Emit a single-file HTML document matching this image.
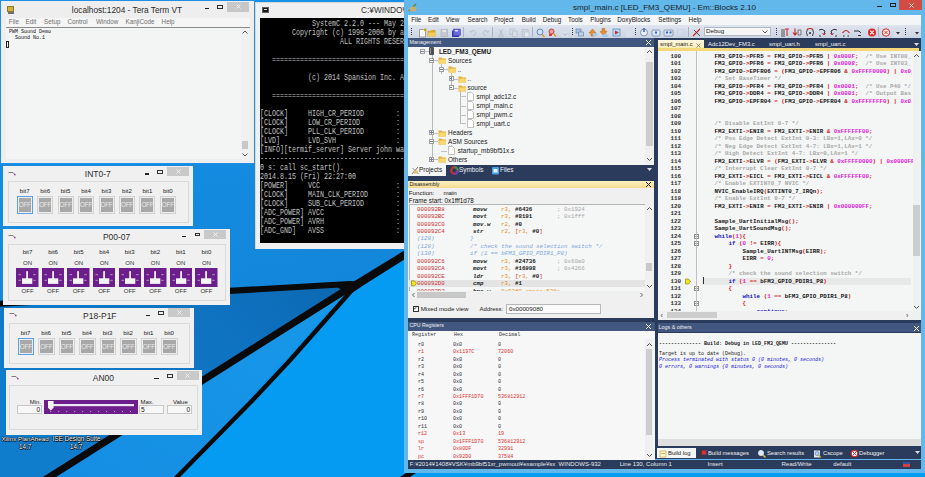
<!DOCTYPE html>
<html><head><meta charset="utf-8"><style>
*{margin:0;padding:0;box-sizing:border-box}
html,body{width:925px;height:477px;overflow:hidden}
body{position:relative;background:#0f86e0;font-family:"Liberation Sans",sans-serif;color:#000}
.a{position:absolute}
.tt{position:absolute;white-space:pre}
</style></head><body>
<svg class="a" style="left:0;top:0" width="925" height="477">
<defs>
<linearGradient id="g1" x1="0" y1="0" x2="0.3" y2="1">
<stop offset="0" stop-color="#1892e8"/>
<stop offset="1" stop-color="#0f80d4"/>
</linearGradient>
<linearGradient id="g2" x1="1" y1="0" x2="0" y2="0.5">
<stop offset="0" stop-color="#0c68b2"/>
<stop offset="0.35" stop-color="#0e72c0"/>
<stop offset="1" stop-color="#107ccc"/>
</linearGradient>
<linearGradient id="g3" x1="1" y1="0" x2="0" y2="1">
<stop offset="0" stop-color="#1898ea"/>
<stop offset="1" stop-color="#148ee2"/>
</linearGradient>
</defs>
<rect width="925" height="477" fill="url(#g1)"/>
<polygon points="0,303 350,285 41,482 0,482" fill="url(#g2)"/>
<polygon points="350,287 48,477 180,477" fill="url(#g3)"/>
<polygon points="350,287 180,477 925,477 925,0" fill="#069bf3"/>
<polyline points="-5,304.1 340.6,284.6 352,284" stroke="#0a0a0a" stroke-width="6" fill="none"/>
<polyline points="349,288 204,379.5 116,435 49.5,477 41,482" stroke="#0a0a0a" stroke-width="7" fill="none" stroke-linejoin="round"/>
<polyline points="352,290 290.2,360 252.8,400 180,474 175,479" stroke="#0a0a0a" stroke-width="4.5" fill="none" stroke-linejoin="round"/>
<polygon points="340,282.5 354.6,281 414,244.6 414,253.4 364.3,284.8 352,293 338,288" fill="#0a0a0a"/>
<polygon points="400,477 406,473 416,473 410,477" fill="#0a0a0a"/>
</svg>
<div class="a" style="left:255px;top:2px;width:150px;height:247px;background:#f0f0f0;border-left:1px solid #d8d8d8;border-top:1px solid #d8d8d8"></div>
<div class="a" style="left:262px;top:7px;width:7px;height:5.5px;background:#1a1a1a;border:1px solid #606060"></div>
<div class="a" style="left:263.5px;top:8.5px;width:3px;height:1px;background:#e0e0e0;"></div>
<div class="tt" style="left:361px;top:6px;font-size:8.3px;line-height:8.3px;color:#303030;">C:¥WINDOWS¥system32¥cmd.exe</div>
<div class="a" style="left:260px;top:18px;width:145px;height:225px;background:#000;"></div>
<div class="a" style="left:260px;top:18px;width:144px;height:225px;overflow:hidden">
<div class="tt" style="left:0;top:0.8999999999999986px;font:9.3px/9px 'Liberation Mono',monospace;color:#c4c4c4;transform:scaleX(0.717);transform-origin:0 0">             SystemC 2.2.0 --- May 20 2011</div>
<div class="tt" style="left:0;top:9.899999999999999px;font:9.3px/9px 'Liberation Mono',monospace;color:#c4c4c4;transform:scaleX(0.717);transform-origin:0 0">        Copyright (c) 1996-2006 by all Contri</div>
<div class="tt" style="left:0;top:18.9px;font:9.3px/9px 'Liberation Mono',monospace;color:#c4c4c4;transform:scaleX(0.717);transform-origin:0 0">                    ALL RIGHTS RESERVED</div>
<div class="tt" style="left:0;top:27.9px;font:9.3px/9px 'Liberation Mono',monospace;color:#c4c4c4;transform:scaleX(0.717);transform-origin:0 0"></div>
<div class="tt" style="left:0;top:36.9px;font:9.3px/9px 'Liberation Mono',monospace;color:#c4c4c4;transform:scaleX(0.717);transform-origin:0 0">   ===========================================</div>
<div class="tt" style="left:0;top:45.900000000000006px;font:9.3px/9px 'Liberation Mono',monospace;color:#c4c4c4;transform:scaleX(0.717);transform-origin:0 0"></div>
<div class="tt" style="left:0;top:54.900000000000006px;font:9.3px/9px 'Liberation Mono',monospace;color:#c4c4c4;transform:scaleX(0.717);transform-origin:0 0">            (c) 2014 Spansion Inc. All right</div>
<div class="tt" style="left:0;top:63.900000000000006px;font:9.3px/9px 'Liberation Mono',monospace;color:#c4c4c4;transform:scaleX(0.717);transform-origin:0 0"></div>
<div class="tt" style="left:0;top:72.9px;font:9.3px/9px 'Liberation Mono',monospace;color:#c4c4c4;transform:scaleX(0.717);transform-origin:0 0">   ===========================================</div>
<div class="tt" style="left:0;top:81.9px;font:9.3px/9px 'Liberation Mono',monospace;color:#c4c4c4;transform:scaleX(0.717);transform-origin:0 0"></div>
<div class="tt" style="left:0;top:90.9px;font:9.3px/9px 'Liberation Mono',monospace;color:#c4c4c4;transform:scaleX(0.717);transform-origin:0 0">[CLOCK]     HIGH_CR_PERIOD        : 250 ns</div>
<div class="tt" style="left:0;top:99.9px;font:9.3px/9px 'Liberation Mono',monospace;color:#c4c4c4;transform:scaleX(0.717);transform-origin:0 0">[CLOCK]     LOW_CR_PERIOD         : 10 ns</div>
<div class="tt" style="left:0;top:108.9px;font:9.3px/9px 'Liberation Mono',monospace;color:#c4c4c4;transform:scaleX(0.717);transform-origin:0 0">[CLOCK]     PLL_CLK_PERIOD        : 10 ns</div>
<div class="tt" style="left:0;top:117.9px;font:9.3px/9px 'Liberation Mono',monospace;color:#c4c4c4;transform:scaleX(0.717);transform-origin:0 0">[LVD]       LVD_SVH               : 4 V</div>
<div class="tt" style="left:0;top:126.9px;font:9.3px/9px 'Liberation Mono',monospace;color:#c4c4c4;transform:scaleX(0.717);transform-origin:0 0">[INFO][termif_server] Server john waiting</div>
<div class="tt" style="left:0;top:135.9px;font:9.3px/9px 'Liberation Mono',monospace;color:#c4c4c4;transform:scaleX(0.717);transform-origin:0 0">--------------------------------------------</div>
<div class="tt" style="left:0;top:144.9px;font:9.3px/9px 'Liberation Mono',monospace;color:#c4c4c4;transform:scaleX(0.717);transform-origin:0 0">0 s: call sc_start().</div>
<div class="tt" style="left:0;top:153.9px;font:9.3px/9px 'Liberation Mono',monospace;color:#c4c4c4;transform:scaleX(0.717);transform-origin:0 0">2014.8.15 (Fri) 22:27:00</div>
<div class="tt" style="left:0;top:162.9px;font:9.3px/9px 'Liberation Mono',monospace;color:#c4c4c4;transform:scaleX(0.717);transform-origin:0 0">[POWER]     VCC                   : 5 V</div>
<div class="tt" style="left:0;top:171.9px;font:9.3px/9px 'Liberation Mono',monospace;color:#c4c4c4;transform:scaleX(0.717);transform-origin:0 0">[CLOCK]     MAIN_CLK_PERIOD       : 1 ns</div>
<div class="tt" style="left:0;top:180.9px;font:9.3px/9px 'Liberation Mono',monospace;color:#c4c4c4;transform:scaleX(0.717);transform-origin:0 0">[CLOCK]     SUB_CLK_PERIOD        : 1 ns</div>
<div class="tt" style="left:0;top:189.9px;font:9.3px/9px 'Liberation Mono',monospace;color:#c4c4c4;transform:scaleX(0.717);transform-origin:0 0">[ADC_POWER] AVCC                  : 5 V</div>
<div class="tt" style="left:0;top:198.9px;font:9.3px/9px 'Liberation Mono',monospace;color:#c4c4c4;transform:scaleX(0.717);transform-origin:0 0">[ADC_POWER] AVRH                  : 5 V</div>
<div class="tt" style="left:0;top:207.9px;font:9.3px/9px 'Liberation Mono',monospace;color:#c4c4c4;transform:scaleX(0.717);transform-origin:0 0">[ADC_GND]   AVSS                  : 0 V</div>
</div>
<div class="a" style="left:0px;top:0px;width:255px;height:163.5px;background:#eeeeee;border:1px solid #1e90ea"></div>
<div class="a" style="left:7px;top:6px;width:7px;height:6px;background:#d8b040;border:1px solid #8a7a30"></div>
<div class="a" style="left:8px;top:12px;width:6px;height:1.5px;background:#707070;"></div>
<div class="tt" style="left:71.8px;top:5.8px;font-size:8.3px;line-height:8.3px;color:#2a2a2a;">localhost:1204 - Tera Term VT</div>
<div class="a" style="left:204.5px;top:7.8px;width:4.2px;height:1.2px;background:#1a1a1a;"></div>
<div class="a" style="left:217.1px;top:4.9px;width:5.7px;height:3.9px;border:0.8px solid #2a2a2a;border-top-width:1.4px"></div>
<div class="a" style="left:227px;top:1.5px;width:22px;height:10.5px;background:#c7c7c7;"></div>
<svg class="a" style="left:235.5px;top:4.3px" width="5" height="5"><path d="M0.5 0.5 L4.5 4.5 M4.5 0.5 L0.5 4.5" stroke="#f4f4f4" stroke-width="0.9"/></svg>
<div class="a" style="left:6px;top:17.5px;width:243.5px;height:9.5px;background:#f5f5f5;"></div>
<div class="tt" style="left:8.8px;top:18.77px;font-size:6.3px;line-height:6.3px;color:#707070;">File</div>
<div class="tt" style="left:25.5px;top:18.77px;font-size:6.3px;line-height:6.3px;color:#707070;">Edit</div>
<div class="tt" style="left:44px;top:18.77px;font-size:6.3px;line-height:6.3px;color:#707070;">Setup</div>
<div class="tt" style="left:67.4px;top:18.77px;font-size:6.3px;line-height:6.3px;color:#707070;">Control</div>
<div class="tt" style="left:95.9px;top:18.77px;font-size:6.3px;line-height:6.3px;color:#707070;">Window</div>
<div class="tt" style="left:125.5px;top:18.77px;font-size:6.3px;line-height:6.3px;color:#707070;">KanjiCode</div>
<div class="tt" style="left:161.6px;top:18.77px;font-size:6.3px;line-height:6.3px;color:#707070;">Help</div>
<div class="a" style="left:6px;top:27px;width:243.5px;height:1px;background:#8a8a8a;"></div>
<div class="a" style="left:6px;top:28px;width:243.5px;height:131px;background:#f3f4f4;"></div>
<div class="tt" style="left:8.8px;top:28.6px;font:6px/6.3px 'Liberation Mono',monospace;color:#111;transform:scaleX(0.833);transform-origin:0 0">PWM Sound Demo
  Sound No.1</div>
<div class="a" style="left:6.3px;top:41.4px;width:2.6px;height:6.3px;background:#f3f4f4;border:0.8px solid #222"></div>
<div class="a" style="left:241px;top:28px;width:8.5px;height:131px;background:#f0f0f0;"></div>
<svg class="a" style="left:242px;top:30px" width="6" height="4"><path d="M0.5 3.5 L3 1 L5.5 3.5" stroke="#555" fill="none" stroke-width="1"/></svg>
<div class="a" style="left:241.5px;top:141px;width:6.5px;height:8px;background:#c8c8c8;"></div>
<svg class="a" style="left:242px;top:152.5px" width="6" height="4"><path d="M0.5 0.5 L3 3 L5.5 0.5" stroke="#555" fill="none" stroke-width="1"/></svg>
<div class="a" style="left:3.1px;top:166px;width:189.70000000000002px;height:60.30000000000001px;background:#f0f0f0;"></div>
<svg class="a" style="left:8.1px;top:170.5px" width="8" height="5"><path d="M0.5 1.5 L5 1.5 L6.5 3.2" stroke="#707070" fill="none" stroke-width="0.9"/><circle cx="6.8" cy="3.6" r="0.9" fill="#a040a0"/></svg>
<div class="tt" style="left:57.8px;top:170.0px;width:80px;text-align:center;font-size:8.5px;line-height:9px;color:#2e2e2e">INT0-7</div>
<div class="a" style="left:144.6px;top:173.4px;width:4.2px;height:1.2px;background:#222;"></div>
<div class="a" style="left:157.15px;top:169.7px;width:5.7px;height:3.9px;border:0.8px solid #333;border-top-width:1.4px"></div>
<div class="a" style="left:167px;top:166.5px;width:22px;height:9.900000000000006px;background:#c9c9c9;"></div>
<svg class="a" style="left:175.5px;top:168.95px" width="5" height="5"><path d="M0.5 0.5 L4.5 4.5 M4.5 0.5 L0.5 4.5" stroke="#f4f4f4" stroke-width="0.9"/></svg>
<div class="a" style="left:7.9px;top:181.4px;width:181.0px;height:41.599999999999994px;background:transparent;border:1px solid #dadada"></div>
<div class="tt" style="left:9.7px;top:187.45px;width:30px;text-align:center;font-size:6.1px;line-height:7.1px;color:#222">bit7</div>
<div class="a" style="left:16.7px;top:196px;width:16px;height:17.5px;border:1px solid #5aa0e8;background:#ececec;padding:1px"><div style="width:100%;height:100%;background:#a8a8a8;color:#e8e8e8;font-size:6.3px;line-height:13.5px;text-align:center;letter-spacing:-0.2px">OFF</div></div>
<div class="tt" style="left:30.15px;top:187.45px;width:30px;text-align:center;font-size:6.1px;line-height:7.1px;color:#222">bit6</div>
<div class="a" style="left:37.15px;top:196px;width:16px;height:17.5px;border:1px solid #d2d2d2;background:#ececec;padding:1px"><div style="width:100%;height:100%;background:#a8a8a8;color:#e8e8e8;font-size:6.3px;line-height:13.5px;text-align:center;letter-spacing:-0.2px">OFF</div></div>
<div class="tt" style="left:50.599999999999994px;top:187.45px;width:30px;text-align:center;font-size:6.1px;line-height:7.1px;color:#222">bit5</div>
<div class="a" style="left:57.599999999999994px;top:196px;width:16px;height:17.5px;border:1px solid #d2d2d2;background:#ececec;padding:1px"><div style="width:100%;height:100%;background:#a8a8a8;color:#e8e8e8;font-size:6.3px;line-height:13.5px;text-align:center;letter-spacing:-0.2px">OFF</div></div>
<div class="tt" style="left:71.05px;top:187.45px;width:30px;text-align:center;font-size:6.1px;line-height:7.1px;color:#222">bit4</div>
<div class="a" style="left:78.05px;top:196px;width:16px;height:17.5px;border:1px solid #d2d2d2;background:#ececec;padding:1px"><div style="width:100%;height:100%;background:#a8a8a8;color:#e8e8e8;font-size:6.3px;line-height:13.5px;text-align:center;letter-spacing:-0.2px">OFF</div></div>
<div class="tt" style="left:91.5px;top:187.45px;width:30px;text-align:center;font-size:6.1px;line-height:7.1px;color:#222">bit3</div>
<div class="a" style="left:98.5px;top:196px;width:16px;height:17.5px;border:1px solid #d2d2d2;background:#ececec;padding:1px"><div style="width:100%;height:100%;background:#a8a8a8;color:#e8e8e8;font-size:6.3px;line-height:13.5px;text-align:center;letter-spacing:-0.2px">OFF</div></div>
<div class="tt" style="left:111.95px;top:187.45px;width:30px;text-align:center;font-size:6.1px;line-height:7.1px;color:#222">bit2</div>
<div class="a" style="left:118.95px;top:196px;width:16px;height:17.5px;border:1px solid #d2d2d2;background:#ececec;padding:1px"><div style="width:100%;height:100%;background:#a8a8a8;color:#e8e8e8;font-size:6.3px;line-height:13.5px;text-align:center;letter-spacing:-0.2px">OFF</div></div>
<div class="tt" style="left:132.39999999999998px;top:187.45px;width:30px;text-align:center;font-size:6.1px;line-height:7.1px;color:#222">bit1</div>
<div class="a" style="left:139.39999999999998px;top:196px;width:16px;height:17.5px;border:1px solid #d2d2d2;background:#ececec;padding:1px"><div style="width:100%;height:100%;background:#a8a8a8;color:#e8e8e8;font-size:6.3px;line-height:13.5px;text-align:center;letter-spacing:-0.2px">OFF</div></div>
<div class="tt" style="left:152.85px;top:187.45px;width:30px;text-align:center;font-size:6.1px;line-height:7.1px;color:#222">bit0</div>
<div class="a" style="left:159.85px;top:196px;width:16px;height:17.5px;border:1px solid #d2d2d2;background:#ececec;padding:1px"><div style="width:100%;height:100%;background:#a8a8a8;color:#e8e8e8;font-size:6.3px;line-height:13.5px;text-align:center;letter-spacing:-0.2px">OFF</div></div>
<div class="a" style="left:3.1px;top:229px;width:226.9px;height:75.60000000000002px;background:#f0f0f0;"></div>
<svg class="a" style="left:8.1px;top:233.5px" width="8" height="5"><path d="M0.5 1.5 L5 1.5 L6.5 3.2" stroke="#707070" fill="none" stroke-width="0.9"/><circle cx="6.8" cy="3.6" r="0.9" fill="#a040a0"/></svg>
<div class="tt" style="left:76.6px;top:232.8px;width:80px;text-align:center;font-size:8.5px;line-height:9px;color:#2e2e2e">P00-07</div>
<div class="a" style="left:181.9px;top:236.20000000000002px;width:4.2px;height:1.2px;background:#222;"></div>
<div class="a" style="left:194.75px;top:232.5px;width:5.7px;height:3.9px;border:0.8px solid #333;border-top-width:1.4px"></div>
<div class="a" style="left:204.3px;top:229.8px;width:22.0px;height:9.199999999999989px;background:#c9c9c9;"></div>
<svg class="a" style="left:212.8px;top:231.9px" width="5" height="5"><path d="M0.5 0.5 L4.5 4.5 M4.5 0.5 L0.5 4.5" stroke="#f4f4f4" stroke-width="0.9"/></svg>
<div class="a" style="left:7.9px;top:244px;width:218.1px;height:57px;background:transparent;border:1px solid #dadada"></div>
<div class="tt" style="left:12.55px;top:247.85px;width:30px;text-align:center;font-size:6.1px;line-height:7.1px;color:#222">bit7</div>
<div class="tt" style="left:12.55px;top:259.7px;width:30px;text-align:center;font-size:6.0px;line-height:7.0px;color:#333">ON</div>
<div class="tt" style="left:12.55px;top:287.8px;width:30px;text-align:center;font-size:6.0px;line-height:7.0px;color:#333">OFF</div>
<svg class="a" style="left:16.3px;top:267.6px" width="22.5" height="19.7"><rect width="22.5" height="19.7" fill="#6c1e8c"/><rect x="10.2" y="3.2" width="1.8" height="8" fill="#f0f0f0"/><rect x="6" y="10.3" width="10.3" height="5.6" fill="#f4f4f4"/><path d="M2.5 6.7 h2.5 M17.2 6.7 h2.5 M2.5 12.3 h2.5 M17.2 12.3 h2.5" stroke="#c8b0d4" stroke-width="0.8"/></svg>
<div class="tt" style="left:38.1px;top:247.85px;width:30px;text-align:center;font-size:6.1px;line-height:7.1px;color:#222">bit6</div>
<div class="tt" style="left:38.1px;top:259.7px;width:30px;text-align:center;font-size:6.0px;line-height:7.0px;color:#333">ON</div>
<div class="tt" style="left:38.1px;top:287.8px;width:30px;text-align:center;font-size:6.0px;line-height:7.0px;color:#333">OFF</div>
<svg class="a" style="left:41.85px;top:267.6px" width="22.5" height="19.7"><rect width="22.5" height="19.7" fill="#6c1e8c"/><rect x="10.2" y="3.2" width="1.8" height="8" fill="#f0f0f0"/><rect x="6" y="10.3" width="10.3" height="5.6" fill="#f4f4f4"/><path d="M2.5 6.7 h2.5 M17.2 6.7 h2.5 M2.5 12.3 h2.5 M17.2 12.3 h2.5" stroke="#c8b0d4" stroke-width="0.8"/></svg>
<div class="tt" style="left:63.650000000000006px;top:247.85px;width:30px;text-align:center;font-size:6.1px;line-height:7.1px;color:#222">bit5</div>
<div class="tt" style="left:63.650000000000006px;top:259.7px;width:30px;text-align:center;font-size:6.0px;line-height:7.0px;color:#333">ON</div>
<div class="tt" style="left:63.650000000000006px;top:287.8px;width:30px;text-align:center;font-size:6.0px;line-height:7.0px;color:#333">OFF</div>
<svg class="a" style="left:67.4px;top:267.6px" width="22.5" height="19.7"><rect width="22.5" height="19.7" fill="#6c1e8c"/><rect x="10.2" y="3.2" width="1.8" height="8" fill="#f0f0f0"/><rect x="6" y="10.3" width="10.3" height="5.6" fill="#f4f4f4"/><path d="M2.5 6.7 h2.5 M17.2 6.7 h2.5 M2.5 12.3 h2.5 M17.2 12.3 h2.5" stroke="#c8b0d4" stroke-width="0.8"/></svg>
<div class="tt" style="left:89.2px;top:247.85px;width:30px;text-align:center;font-size:6.1px;line-height:7.1px;color:#222">bit4</div>
<div class="tt" style="left:89.2px;top:259.7px;width:30px;text-align:center;font-size:6.0px;line-height:7.0px;color:#333">ON</div>
<div class="tt" style="left:89.2px;top:287.8px;width:30px;text-align:center;font-size:6.0px;line-height:7.0px;color:#333">OFF</div>
<svg class="a" style="left:92.95px;top:267.6px" width="22.5" height="19.7"><rect width="22.5" height="19.7" fill="#6c1e8c"/><rect x="10.2" y="3.2" width="1.8" height="8" fill="#f0f0f0"/><rect x="6" y="10.3" width="10.3" height="5.6" fill="#f4f4f4"/><path d="M2.5 6.7 h2.5 M17.2 6.7 h2.5 M2.5 12.3 h2.5 M17.2 12.3 h2.5" stroke="#c8b0d4" stroke-width="0.8"/></svg>
<div class="tt" style="left:114.75px;top:247.85px;width:30px;text-align:center;font-size:6.1px;line-height:7.1px;color:#222">bit3</div>
<div class="tt" style="left:114.75px;top:259.7px;width:30px;text-align:center;font-size:6.0px;line-height:7.0px;color:#333">ON</div>
<div class="tt" style="left:114.75px;top:287.8px;width:30px;text-align:center;font-size:6.0px;line-height:7.0px;color:#333">OFF</div>
<svg class="a" style="left:118.5px;top:267.6px" width="22.5" height="19.7"><rect width="22.5" height="19.7" fill="#6c1e8c"/><rect x="10.2" y="3.2" width="1.8" height="8" fill="#f0f0f0"/><rect x="6" y="10.3" width="10.3" height="5.6" fill="#f4f4f4"/><path d="M2.5 6.7 h2.5 M17.2 6.7 h2.5 M2.5 12.3 h2.5 M17.2 12.3 h2.5" stroke="#c8b0d4" stroke-width="0.8"/></svg>
<div class="tt" style="left:140.3px;top:247.85px;width:30px;text-align:center;font-size:6.1px;line-height:7.1px;color:#222">bit2</div>
<div class="tt" style="left:140.3px;top:259.7px;width:30px;text-align:center;font-size:6.0px;line-height:7.0px;color:#333">ON</div>
<div class="tt" style="left:140.3px;top:287.8px;width:30px;text-align:center;font-size:6.0px;line-height:7.0px;color:#333">OFF</div>
<svg class="a" style="left:144.05px;top:267.6px" width="22.5" height="19.7"><rect width="22.5" height="19.7" fill="#6c1e8c"/><rect x="10.2" y="3.2" width="1.8" height="8" fill="#f0f0f0"/><rect x="6" y="10.3" width="10.3" height="5.6" fill="#f4f4f4"/><path d="M2.5 6.7 h2.5 M17.2 6.7 h2.5 M2.5 12.3 h2.5 M17.2 12.3 h2.5" stroke="#c8b0d4" stroke-width="0.8"/></svg>
<div class="tt" style="left:165.85000000000002px;top:247.85px;width:30px;text-align:center;font-size:6.1px;line-height:7.1px;color:#222">bit1</div>
<div class="tt" style="left:165.85000000000002px;top:259.7px;width:30px;text-align:center;font-size:6.0px;line-height:7.0px;color:#333">ON</div>
<div class="tt" style="left:165.85000000000002px;top:287.8px;width:30px;text-align:center;font-size:6.0px;line-height:7.0px;color:#333">OFF</div>
<svg class="a" style="left:169.60000000000002px;top:267.6px" width="22.5" height="19.7"><rect width="22.5" height="19.7" fill="#6c1e8c"/><rect x="10.2" y="3.2" width="1.8" height="8" fill="#f0f0f0"/><rect x="6" y="10.3" width="10.3" height="5.6" fill="#f4f4f4"/><path d="M2.5 6.7 h2.5 M17.2 6.7 h2.5 M2.5 12.3 h2.5 M17.2 12.3 h2.5" stroke="#c8b0d4" stroke-width="0.8"/></svg>
<div class="tt" style="left:191.4px;top:247.85px;width:30px;text-align:center;font-size:6.1px;line-height:7.1px;color:#222">bit0</div>
<div class="tt" style="left:191.4px;top:259.7px;width:30px;text-align:center;font-size:6.0px;line-height:7.0px;color:#333">ON</div>
<div class="tt" style="left:191.4px;top:287.8px;width:30px;text-align:center;font-size:6.0px;line-height:7.0px;color:#333">OFF</div>
<svg class="a" style="left:195.15px;top:267.6px" width="22.5" height="19.7"><rect width="22.5" height="19.7" fill="#6c1e8c"/><rect x="10.2" y="3.2" width="1.8" height="8" fill="#f0f0f0"/><rect x="6" y="10.3" width="10.3" height="5.6" fill="#f4f4f4"/><path d="M2.5 6.7 h2.5 M17.2 6.7 h2.5 M2.5 12.3 h2.5 M17.2 12.3 h2.5" stroke="#c8b0d4" stroke-width="0.8"/></svg>
<div class="a" style="left:4.2px;top:307.6px;width:189.70000000000002px;height:60.19999999999999px;background:#f0f0f0;"></div>
<svg class="a" style="left:9.2px;top:312.1px" width="8" height="5"><path d="M0.5 1.5 L5 1.5 L6.5 3.2" stroke="#707070" fill="none" stroke-width="0.9"/><circle cx="6.8" cy="3.6" r="0.9" fill="#a040a0"/></svg>
<div class="tt" style="left:59.8px;top:311.5px;width:80px;text-align:center;font-size:8.5px;line-height:9px;color:#2e2e2e">P18-P1F</div>
<div class="a" style="left:145.9px;top:314.9px;width:4.2px;height:1.2px;background:#222;"></div>
<div class="a" style="left:158.15px;top:311.2px;width:5.7px;height:3.9px;border:0.8px solid #333;border-top-width:1.4px"></div>
<div class="a" style="left:168px;top:307.9px;width:22.30000000000001px;height:9.600000000000023px;background:#c9c9c9;"></div>
<svg class="a" style="left:176.65px;top:310.2px" width="5" height="5"><path d="M0.5 0.5 L4.5 4.5 M4.5 0.5 L0.5 4.5" stroke="#f4f4f4" stroke-width="0.9"/></svg>
<div class="a" style="left:8.5px;top:323px;width:181.5px;height:41px;background:transparent;border:1px solid #dadada"></div>
<div class="tt" style="left:10.600000000000001px;top:329.34999999999997px;width:30px;text-align:center;font-size:6.1px;line-height:7.1px;color:#222">bit7</div>
<div class="a" style="left:17.6px;top:338px;width:16.5px;height:17px;border:1px solid #5aa0e8;background:#ececec;padding:1px"><div style="width:100%;height:100%;background:#a8a8a8;color:#e8e8e8;font-size:6.3px;line-height:13px;text-align:center;letter-spacing:-0.2px">OFF</div></div>
<div class="tt" style="left:31.1px;top:329.34999999999997px;width:30px;text-align:center;font-size:6.1px;line-height:7.1px;color:#222">bit6</div>
<div class="a" style="left:38.1px;top:338px;width:16.5px;height:17px;border:1px solid #d2d2d2;background:#ececec;padding:1px"><div style="width:100%;height:100%;background:#a8a8a8;color:#e8e8e8;font-size:6.3px;line-height:13px;text-align:center;letter-spacing:-0.2px">OFF</div></div>
<div class="tt" style="left:51.599999999999994px;top:329.34999999999997px;width:30px;text-align:center;font-size:6.1px;line-height:7.1px;color:#222">bit5</div>
<div class="a" style="left:58.599999999999994px;top:338px;width:16.5px;height:17px;border:1px solid #d2d2d2;background:#ececec;padding:1px"><div style="width:100%;height:100%;background:#a8a8a8;color:#e8e8e8;font-size:6.3px;line-height:13px;text-align:center;letter-spacing:-0.2px">OFF</div></div>
<div class="tt" style="left:72.1px;top:329.34999999999997px;width:30px;text-align:center;font-size:6.1px;line-height:7.1px;color:#222">bit4</div>
<div class="a" style="left:79.1px;top:338px;width:16.5px;height:17px;border:1px solid #d2d2d2;background:#ececec;padding:1px"><div style="width:100%;height:100%;background:#a8a8a8;color:#e8e8e8;font-size:6.3px;line-height:13px;text-align:center;letter-spacing:-0.2px">OFF</div></div>
<div class="tt" style="left:92.6px;top:329.34999999999997px;width:30px;text-align:center;font-size:6.1px;line-height:7.1px;color:#222">bit3</div>
<div class="a" style="left:99.6px;top:338px;width:16.5px;height:17px;border:1px solid #d2d2d2;background:#ececec;padding:1px"><div style="width:100%;height:100%;background:#a8a8a8;color:#e8e8e8;font-size:6.3px;line-height:13px;text-align:center;letter-spacing:-0.2px">OFF</div></div>
<div class="tt" style="left:113.1px;top:329.34999999999997px;width:30px;text-align:center;font-size:6.1px;line-height:7.1px;color:#222">bit2</div>
<div class="a" style="left:120.1px;top:338px;width:16.5px;height:17px;border:1px solid #d2d2d2;background:#ececec;padding:1px"><div style="width:100%;height:100%;background:#a8a8a8;color:#e8e8e8;font-size:6.3px;line-height:13px;text-align:center;letter-spacing:-0.2px">OFF</div></div>
<div class="tt" style="left:133.6px;top:329.34999999999997px;width:30px;text-align:center;font-size:6.1px;line-height:7.1px;color:#222">bit1</div>
<div class="a" style="left:140.6px;top:338px;width:16.5px;height:17px;border:1px solid #d2d2d2;background:#ececec;padding:1px"><div style="width:100%;height:100%;background:#a8a8a8;color:#e8e8e8;font-size:6.3px;line-height:13px;text-align:center;letter-spacing:-0.2px">OFF</div></div>
<div class="tt" style="left:154.1px;top:329.34999999999997px;width:30px;text-align:center;font-size:6.1px;line-height:7.1px;color:#222">bit0</div>
<div class="a" style="left:161.1px;top:338px;width:16.5px;height:17px;border:1px solid #d2d2d2;background:#ececec;padding:1px"><div style="width:100%;height:100%;background:#a8a8a8;color:#e8e8e8;font-size:6.3px;line-height:13px;text-align:center;letter-spacing:-0.2px">OFF</div></div>
<div class="a" style="left:5.7px;top:370px;width:196.70000000000002px;height:64.5px;background:#f0f0f0;"></div>
<svg class="a" style="left:10.7px;top:374.5px" width="8" height="5"><path d="M0.5 1.5 L5 1.5 L6.5 3.2" stroke="#707070" fill="none" stroke-width="0.9"/><circle cx="6.8" cy="3.6" r="0.9" fill="#a040a0"/></svg>
<div class="tt" style="left:63.400000000000006px;top:374.3px;width:80px;text-align:center;font-size:8.5px;line-height:9px;color:#2e2e2e">AN00</div>
<div class="a" style="left:154.4px;top:377.7px;width:4.2px;height:1.2px;background:#222;"></div>
<div class="a" style="left:166.95000000000002px;top:374.0px;width:5.7px;height:3.9px;border:0.8px solid #333;border-top-width:1.4px"></div>
<div class="a" style="left:177px;top:370.8px;width:21.69999999999999px;height:9.199999999999989px;background:#c9c9c9;"></div>
<svg class="a" style="left:185.35px;top:372.9px" width="5" height="5"><path d="M0.5 0.5 L4.5 4.5 M4.5 0.5 L0.5 4.5" stroke="#f4f4f4" stroke-width="0.9"/></svg>
<div class="a" style="left:9px;top:384.8px;width:189px;height:45.69999999999999px;background:transparent;border:1px solid #dadada"></div>
<div class="tt" style="left:20px;top:398.6px;width:21px;text-align:right;font-size:6px;line-height:7px;color:#222">Min.</div>
<div class="a" style="left:16.6px;top:405.4px;width:25.3px;height:9.1px;background:#f7f7f7;border:1px solid #c8c8c8"></div>
<div class="tt" style="left:16.6px;top:406.4px;width:23.5px;text-align:right;font-size:6.6px;line-height:7px;color:#222">0</div>
<svg class="a" style="left:43.8px;top:400.3px" width="94" height="14.1"><rect width="94" height="14.1" fill="#6c1e8c"/><rect x="4" y="4" width="86" height="2.2" fill="#ece4f0"/><path d="M4 1 h5.6 v6.8 l-2.8 2.6 l-2.8 -2.6z" fill="#f4f4f4"/><rect x="6.30" y="11" width="0.9" height="0.9" fill="#d8c8e0"/><rect x="14.28" y="11" width="0.9" height="0.9" fill="#d8c8e0"/><rect x="22.26" y="11" width="0.9" height="0.9" fill="#d8c8e0"/><rect x="30.24" y="11" width="0.9" height="0.9" fill="#d8c8e0"/><rect x="38.22" y="11" width="0.9" height="0.9" fill="#d8c8e0"/><rect x="46.20" y="11" width="0.9" height="0.9" fill="#d8c8e0"/><rect x="54.18" y="11" width="0.9" height="0.9" fill="#d8c8e0"/><rect x="62.16" y="11" width="0.9" height="0.9" fill="#d8c8e0"/><rect x="70.14" y="11" width="0.9" height="0.9" fill="#d8c8e0"/><rect x="78.12" y="11" width="0.9" height="0.9" fill="#d8c8e0"/><rect x="86.10" y="11" width="0.9" height="0.9" fill="#d8c8e0"/></svg>
<div class="tt" style="left:140.5px;top:398.6px;font-size:6px;line-height:7px;color:#222">Max.</div>
<div class="a" style="left:139px;top:405.4px;width:25.4px;height:9.1px;background:#f7f7f7;border:1px solid #c8c8c8"></div>
<div class="tt" style="left:141px;top:406.4px;font-size:6.6px;line-height:7px;color:#222">5</div>
<div class="tt" style="left:172.9px;top:398.6px;font-size:6px;line-height:7px;color:#222">Value</div>
<div class="a" style="left:167.2px;top:405.4px;width:24.5px;height:9.1px;background:#f7f7f7;border:1px solid #c8c8c8"></div>
<div class="tt" style="left:167.2px;top:406.4px;width:23px;text-align:right;font-size:6.6px;line-height:7px;color:#222">0</div>
<div class="tt" style="left:1.4px;top:434.8px;font-size:6.25px;line-height:7.5px;color:#fff;text-shadow:0 0 1px #000,0 0 1px #000,0 0 1px #000,0.5px 0.5px 0.5px #000">Xilinx PlanAhead</div>
<div class="tt" style="left:19px;top:442.5px;font-size:6.3px;line-height:7.5px;color:#fff;text-shadow:0 0 1px #000,0 0 1px #000,0 0 1px #000,0.5px 0.5px 0.5px #000">14.7</div>
<div class="tt" style="left:52.8px;top:434.8px;font-size:6.3px;line-height:7.5px;color:#fff;text-shadow:0 0 1px #000,0 0 1px #000,0 0 1px #000,0.5px 0.5px 0.5px #000">ISE Design Suite</div>
<div class="tt" style="left:70px;top:442.5px;font-size:6.3px;line-height:7.5px;color:#fff;text-shadow:0 0 1px #000,0 0 1px #000,0 0 1px #000,0.5px 0.5px 0.5px #000">14.7</div>
<div class="a" style="left:404px;top:0px;width:521px;height:472.5px;background:#62b7eb;"></div>
<div class="tt" style="left:573px;top:4.06px;font-size:8.1px;line-height:8.1px;color:#1e1e1e;">smpl_main.c [LED_FM3_QEMU] - Em::Blocks 2.10</div>
<svg class="a" style="left:407px;top:2px" width="12" height="12"><path d="M2 9 L9 2" stroke="#6a8a30" stroke-width="1.6"/><ellipse cx="6" cy="7" rx="3.5" ry="2.5" fill="#c8b070"/></svg>
<div class="a" style="left:877.2px;top:5.8px;width:4.6px;height:1.3px;background:#1e1e1e;"></div>
<div class="a" style="left:890.2px;top:3.2px;width:5.7px;height:3.8px;border:0.8px solid #1e1e1e;border-top-width:1.3px"></div>
<div class="a" style="left:899.4px;top:0px;width:22.5px;height:9.8px;background:#d24c44;"></div>
<svg class="a" style="left:908.5px;top:2.8px" width="5" height="5"><path d="M0.5 0.5 L4.5 4.5 M4.5 0.5 L0.5 4.5" stroke="#f4f4f4" stroke-width="0.9"/></svg>
<div class="a" style="left:408px;top:15px;width:513px;height:10px;background:#f4f5f6;"></div>
<div class="tt" style="left:411.2px;top:16.67px;font-size:6.3px;line-height:6.3px;color:#1a1a1a;">File</div>
<div class="tt" style="left:428px;top:16.67px;font-size:6.3px;line-height:6.3px;color:#1a1a1a;">Edit</div>
<div class="tt" style="left:445.8px;top:16.67px;font-size:6.3px;line-height:6.3px;color:#1a1a1a;">View</div>
<div class="tt" style="left:467.5px;top:16.67px;font-size:6.3px;line-height:6.3px;color:#1a1a1a;">Search</div>
<div class="tt" style="left:494px;top:16.67px;font-size:6.3px;line-height:6.3px;color:#1a1a1a;">Project</div>
<div class="tt" style="left:521.7px;top:16.67px;font-size:6.3px;line-height:6.3px;color:#1a1a1a;">Build</div>
<div class="tt" style="left:542.8px;top:16.67px;font-size:6.3px;line-height:6.3px;color:#1a1a1a;">Debug</div>
<div class="tt" style="left:568px;top:16.67px;font-size:6.3px;line-height:6.3px;color:#1a1a1a;">Tools</div>
<div class="tt" style="left:590.3px;top:16.67px;font-size:6.3px;line-height:6.3px;color:#1a1a1a;">Plugins</div>
<div class="tt" style="left:617.3px;top:16.67px;font-size:6.3px;line-height:6.3px;color:#1a1a1a;">DoxyBlocks</div>
<div class="tt" style="left:658.3px;top:16.67px;font-size:6.3px;line-height:6.3px;color:#1a1a1a;">Settings</div>
<div class="tt" style="left:688.6px;top:16.67px;font-size:6.3px;line-height:6.3px;color:#1a1a1a;">Help</div>
<div class="a" style="left:408px;top:25px;width:513px;height:13px;background:linear-gradient(#dfe5ef,#cbd4e3);"></div>
<div class="a" style="left:411px;top:27.5px;width:1px;height:1px;background:#3a3a3a;"></div>
<div class="a" style="left:411px;top:29.5px;width:1px;height:1px;background:#3a3a3a;"></div>
<div class="a" style="left:411px;top:31.5px;width:1px;height:1px;background:#3a3a3a;"></div>
<div class="a" style="left:411px;top:33.5px;width:1px;height:1px;background:#3a3a3a;"></div>
<svg class="a" style="left:418px;top:26.5px" width="10" height="11"><path d="M1.5 2.5h4l2 2v5.5h-6z" fill="#fafafa" stroke="#8a8a8a" stroke-width="0.8"/><circle cx="7.2" cy="2.8" r="1.6" fill="#e0b020"/><circle cx="7.2" cy="2.8" r="0.7" fill="#70b030"/></svg>
<svg class="a" style="left:427px;top:26.5px" width="10" height="11"><path d="M0.5 4h3l1-1h4v6.5h-8z" fill="#d8a830"/><path d="M1.5 5.5h8l-1.5 4h-7z" fill="#f0cc60"/></svg>
<svg class="a" style="left:440px;top:26.5px" width="9" height="11"><rect x="1" y="2.5" width="6.5" height="7" fill="#c4c8d0" stroke="#a8aeb8" stroke-width="0.6"/><rect x="2.5" y="3" width="3.5" height="2" fill="#e8e8e8"/></svg>
<svg class="a" style="left:451px;top:26.5px" width="10" height="11"><rect x="1" y="3.5" width="7" height="6.5" fill="#3a3ab8"/><rect x="2.5" y="2" width="7" height="6.5" fill="#6a6ae0" stroke="#4040b0" stroke-width="0.5"/><rect x="4" y="3" width="3" height="1.5" fill="#e0e0f0"/></svg>
<div class="a" style="left:463px;top:27px;width:1px;height:10px;background:#a9b3c4;"></div>
<svg class="a" style="left:469px;top:26.5px" width="9" height="11"><path d="M2 5 a2.5 2.5 0 1 1 2 3.5" stroke="#b8c0cc" fill="none" stroke-width="1"/><path d="M1 3.5 l1 2 l2 -1" stroke="#b8c0cc" fill="none" stroke-width="0.8"/></svg>
<svg class="a" style="left:481px;top:26.5px" width="9" height="11"><path d="M7 5 a2.5 2.5 0 1 0 -2 3.5" stroke="#b8c0cc" fill="none" stroke-width="1"/><path d="M8 3.5 l-1 2 l-2 -1" stroke="#b8c0cc" fill="none" stroke-width="0.8"/></svg>
<div class="a" style="left:492px;top:27px;width:1px;height:10px;background:#a9b3c4;"></div>
<svg class="a" style="left:497px;top:26.5px" width="8" height="11"><path d="M2 2 L5.5 8 M6 2 L2.5 8" stroke="#b0b8c4" stroke-width="0.8"/><circle cx="2.5" cy="9" r="1" fill="none" stroke="#b0b8c4" stroke-width="0.6"/><circle cx="5.5" cy="9" r="1" fill="none" stroke="#b0b8c4" stroke-width="0.6"/></svg>
<svg class="a" style="left:509px;top:26.5px" width="9" height="11"><rect x="1" y="2" width="4.5" height="5.5" fill="none" stroke="#b8c0cc" stroke-width="0.8"/><rect x="3.5" y="4" width="4.5" height="5.5" fill="#d8dde6" stroke="#b8c0cc" stroke-width="0.8"/></svg>
<svg class="a" style="left:521px;top:26.5px" width="9" height="11"><rect x="1" y="2.5" width="6" height="7" fill="#d0d4dc" stroke="#b8c0cc" stroke-width="0.8"/><rect x="3.5" y="5" width="4.5" height="5" fill="#e4e8ee" stroke="#b8c0cc" stroke-width="0.6"/></svg>
<div class="a" style="left:532px;top:27px;width:1px;height:10px;background:#a9b3c4;"></div>
<svg class="a" style="left:536px;top:26.5px" width="10" height="11"><circle cx="4" cy="5" r="3" fill="#c8e0f8" stroke="#5880b0" stroke-width="0.9"/><path d="M6 7.5 L8.5 10" stroke="#d0a020" stroke-width="1.6"/></svg>
<svg class="a" style="left:548px;top:26.5px" width="10" height="11"><circle cx="3.5" cy="4.5" r="2.5" fill="#f0a0a0" stroke="#c03030" stroke-width="0.9"/><path d="M5.5 6.5 L8 9.5" stroke="#d0a020" stroke-width="1.5"/><rect x="1" y="7" width="3" height="2" fill="#d04040"/></svg>
<div class="a" style="left:561px;top:27px;width:7px;height:10px;background:#d8dde8;"></div>
<svg class="a" style="left:562px;top:26.5px" width="6" height="11"><path d="M1 6.5 L3 8.5 L5 6.5" stroke="#a0a8b8" fill="none" stroke-width="0.8"/></svg>
<div class="a" style="left:572px;top:27.5px;width:1px;height:1px;background:#3a3a3a;"></div>
<div class="a" style="left:572px;top:29.5px;width:1px;height:1px;background:#3a3a3a;"></div>
<div class="a" style="left:572px;top:31.5px;width:1px;height:1px;background:#3a3a3a;"></div>
<div class="a" style="left:572px;top:33.5px;width:1px;height:1px;background:#3a3a3a;"></div>
<svg class="a" style="left:575px;top:26.5px" width="10" height="11"><rect x="1" y="2" width="5" height="4" fill="#a8c8e8" stroke="#5878a0" stroke-width="0.6"/><rect x="3.5" y="5" width="5" height="4" fill="#c0d4e8" stroke="#5878a0" stroke-width="0.6"/></svg>
<svg class="a" style="left:588px;top:26.5px" width="10" height="11"><path d="M1 6 L4.5 2 L8 6 h-2v3h-3v-3z" fill="#e89030" stroke="#b06010" stroke-width="0.5"/><ellipse cx="7" cy="7.5" rx="2.5" ry="1.8" fill="#a0c8ec"/></svg>
<svg class="a" style="left:600px;top:26.5px" width="10" height="11"><path d="M2 1.5 h3 v3 h2 l-3.5 4 l-3.5 -4 h2z" fill="#e89030" stroke="#b06010" stroke-width="0.5"/><ellipse cx="5" cy="8.5" rx="3" ry="1.6" fill="#a0c8ec"/></svg>
<svg class="a" style="left:612px;top:26.5px" width="10" height="11"><rect x="1" y="2" width="7" height="7" fill="#b8d8f4" stroke="#4a78b0" stroke-width="0.6"/><path d="M3 3.5 L7 5.5 L3 7.5z" fill="#d03030"/></svg>
<div class="a" style="left:626px;top:27px;width:7px;height:10px;background:#d8dde8;"></div>
<div class="a" style="left:635px;top:27.5px;width:1px;height:1px;background:#3a3a3a;"></div>
<div class="a" style="left:635px;top:29.5px;width:1px;height:1px;background:#3a3a3a;"></div>
<div class="a" style="left:635px;top:31.5px;width:1px;height:1px;background:#3a3a3a;"></div>
<div class="a" style="left:635px;top:33.5px;width:1px;height:1px;background:#3a3a3a;"></div>
<svg class="a" style="left:639px;top:26.5px" width="10" height="11"><circle cx="5" cy="5.5" r="3.5" fill="#e8eef8" stroke="#6880a8" stroke-width="0.8"/><path d="M5 1 v4" stroke="#3060c0" stroke-width="1.5"/></svg>
<svg class="a" style="left:651px;top:26.5px" width="10" height="11"><rect x="1" y="3" width="8" height="6" rx="1" fill="#dce6f2" stroke="#6880a8" stroke-width="0.7"/><rect x="4" y="4.5" width="2" height="2" fill="#3060d0"/></svg>
<svg class="a" style="left:663px;top:26.5px" width="11" height="11"><rect x="1" y="3" width="9" height="6" rx="1" fill="#dce6f2" stroke="#6880a8" stroke-width="0.7"/><rect x="3" y="4.5" width="2" height="2" fill="#3060d0"/><rect x="6.5" y="4.5" width="2" height="2" fill="#3060d0"/></svg>
<svg class="a" style="left:676px;top:26.5px" width="10" height="11"><rect x="1.5" y="2.5" width="7" height="7" fill="none" stroke="#c0c8d4" stroke-width="0.8" stroke-dasharray="1 1"/></svg>
<div class="a" style="left:688px;top:27px;width:1px;height:10px;background:#a9b3c4;"></div>
<svg class="a" style="left:692px;top:26.5px" width="10" height="11"><path d="M1 9 L8 2" stroke="#d02020" stroke-width="1.1"/><path d="M2 3 L8 9" stroke="#404040" stroke-width="0.9"/></svg>
<div class="a" style="left:703.5px;top:26.8px;width:67px;height:9px;background:#f6f6f6;border:1px solid #b0b8c4"></div>
<div class="tt" style="left:706px;top:27.83px;font-size:6.2px;line-height:6.2px;color:#1a1a1a;">Debug</div>
<svg class="a" style="left:762px;top:29.5px" width="6" height="4"><path d="M0.5 0.5 L3 3 L5.5 0.5" stroke="#444" fill="none" stroke-width="0.9"/></svg>
<div class="a" style="left:776px;top:27.5px;width:1px;height:1px;background:#3a3a3a;"></div>
<div class="a" style="left:776px;top:29.5px;width:1px;height:1px;background:#3a3a3a;"></div>
<div class="a" style="left:776px;top:31.5px;width:1px;height:1px;background:#3a3a3a;"></div>
<div class="a" style="left:776px;top:33.5px;width:1px;height:1px;background:#3a3a3a;"></div>
<svg class="a" style="left:780px;top:26.5px" width="10" height="11"><path d="M1 3h4 M1 5h4 M1 7h4 M1 9h4" stroke="#303030" stroke-width="0.8"/><path d="M5 2 L9 2 M7 2 v7" stroke="#d02020" stroke-width="1"/></svg>
<svg class="a" style="left:792px;top:26.5px" width="10" height="11"><path d="M3 1.5 v6 M1 5.5 l2 2.5 l2 -2.5" stroke="#d02020" fill="none" stroke-width="1.1"/><path d="M6 3h3v5h-3z" fill="none" stroke="#505050" stroke-width="0.7"/></svg>
<svg class="a" style="left:805px;top:26.5px" width="10" height="11"><path d="M2.5 2 q-2 3.5 0 7 M7.5 2 q2 3.5 0 7" stroke="#303030" fill="none" stroke-width="0.9"/><path d="M2 2.5 q3 -2 6 0" stroke="#d02020" fill="none" stroke-width="1.1"/><circle cx="5" cy="6" r="1" fill="#303030"/></svg>
<svg class="a" style="left:817px;top:26.5px" width="10" height="11"><path d="M2 3 q3 -2 6 1 l-1 3" stroke="#303030" fill="none" stroke-width="1"/><path d="M5.5 6.5 l1.5 1.5 l1.5 -2" stroke="#d02020" fill="none" stroke-width="1"/><path d="M2 9 h2" stroke="#303030" stroke-width="1"/></svg>
<svg class="a" style="left:829px;top:26.5px" width="10" height="11"><path d="M8 3 q-3 -2 -6 1 l1 3" stroke="#303030" fill="none" stroke-width="1"/><path d="M1.5 6 l1.5 2 l1.5 -1.5" stroke="#d02020" fill="none" stroke-width="1"/><path d="M6 9 h2" stroke="#303030" stroke-width="1"/></svg>
<svg class="a" style="left:841px;top:26.5px" width="10" height="11"><path d="M1.5 6 q3.5 -5 7 0" stroke="#d02020" fill="none" stroke-width="1.2"/><path d="M2 9h1.5 M6.5 9h1.5" stroke="#303030" stroke-width="1"/></svg>
<svg class="a" style="left:853px;top:26.5px" width="10" height="11"><path d="M1 4 h5 l2 2" stroke="#303030" fill="none" stroke-width="1"/><path d="M5 8.5h3" stroke="#303030" stroke-width="1"/></svg>
<svg class="a" style="left:867px;top:26.5px" width="10" height="11"><circle cx="5" cy="5.5" r="4" fill="#e02828"/><path d="M3.2 3.7 L6.8 7.3 M6.8 3.7 L3.2 7.3" stroke="#fff" stroke-width="1.1"/></svg>
<div class="a" style="left:878px;top:27px;width:1px;height:10px;background:#a9b3c4;"></div>
<svg class="a" style="left:881px;top:26.5px" width="10" height="11"><circle cx="5" cy="5.5" r="3.7" fill="#fbe8e8" stroke="#d02828" stroke-width="1"/><path d="M3.5 4 L6.5 7 M6.5 4 L3.5 7" stroke="#d02828" stroke-width="0.9"/></svg>
<div class="a" style="left:894px;top:27px;width:7px;height:10px;background:#d8dde8;"></div>
<svg class="a" style="left:895px;top:26.5px" width="6" height="11"><path d="M1 5 h4 l-2 2.5z" fill="#303030"/></svg>
<div class="a" style="left:905px;top:27.5px;width:1px;height:1px;background:#3a3a3a;"></div>
<div class="a" style="left:905px;top:29.5px;width:1px;height:1px;background:#3a3a3a;"></div>
<div class="a" style="left:905px;top:31.5px;width:1px;height:1px;background:#3a3a3a;"></div>
<div class="a" style="left:905px;top:33.5px;width:1px;height:1px;background:#3a3a3a;"></div>
<svg class="a" style="left:914px;top:26.5px" width="6" height="11"><path d="M1 5 h4 l-2 2.5z" fill="#303030"/></svg>
<div class="a" style="left:408px;top:38px;width:512.5px;height:421px;background:#2b3b5c;"></div>
<div class="a" style="left:408px;top:38px;width:246px;height:9px;background:#42577f;"></div>
<div class="tt" style="left:409.5px;top:39.78px;font-size:5.4px;line-height:5.4px;color:#f0f0f0;">Management</div>
<svg class="a" style="left:645px;top:39px" width="7" height="7"><path d="M1 1 L6 6 M6 1 L1 6" stroke="#fff" stroke-width="1"/></svg>
<div class="a" style="left:408px;top:47px;width:246px;height:117.5px;background:#f4f5f5;"></div>
<div class="a" style="left:431.5px;top:55px;width:1px;height:105px;background:#b8b8b8;"></div>
<div class="a" style="left:441px;top:64px;width:1px;height:10px;background:#b8b8b8;"></div>
<div class="a" style="left:450.5px;top:73px;width:1px;height:16px;background:#b8b8b8;"></div>
<div class="a" style="left:460px;top:91px;width:1px;height:33px;background:#b8b8b8;"></div>
<div class="a" style="left:450.5px;top:145px;width:1px;height:6px;background:#b8b8b8;"></div>
<div class="a" style="left:428.9px;top:47.1px;width:5px;height:8px;background:#505050;border-radius:1px"></div>
<div class="a" style="left:429.9px;top:48.1px;width:1px;height:6px;background:#909090;"></div>
<div class="a" style="left:419.9px;top:48.6px;width:5px;height:5px;border:0.8px solid #a0a0a0;background:#fff"></div>
<div class="a" style="left:421.09999999999997px;top:50.800000000000004px;width:2.6px;height:0.7px;background:#7080a0;"></div>
<div class="a" style="left:424.9px;top:51.1px;width:4px;height:0.8px;background:#c0c0c0;"></div>
<div class="tt" style="left:438.9px;top:48.59px;font-size:6.45px;line-height:6.45px;color:#1a1a1a;font-weight:bold">LED_FM3_QEMU</div>
<svg class="a" style="left:438px;top:56.2px" width="9" height="8"><path d="M0.5 1.5 h3 l1 1 h3.5 v5 h-7.5z" fill="#e0b040"/><path d="M1.5 3.5 h7 l-1 4 h-6.5z" fill="#f8d870"/></svg>
<div class="a" style="left:429px;top:57.7px;width:5px;height:5px;border:0.8px solid #a0a0a0;background:#fff"></div>
<div class="a" style="left:430.2px;top:59.900000000000006px;width:2.6px;height:0.7px;background:#7080a0;"></div>
<div class="a" style="left:434px;top:60.2px;width:4px;height:0.8px;background:#c0c0c0;"></div>
<div class="tt" style="left:448px;top:57.69px;font-size:6.45px;line-height:6.45px;color:#1a1a1a;">Sources</div>
<svg class="a" style="left:447.8px;top:65.3px" width="9" height="8"><path d="M0.5 1.5 h3 l1 1 h3.5 v5 h-7.5z" fill="#e0b040"/><path d="M1.5 3.5 h7 l-1 4 h-6.5z" fill="#f8d870"/></svg>
<div class="a" style="left:438.8px;top:66.8px;width:5px;height:5px;border:0.8px solid #a0a0a0;background:#fff"></div>
<div class="a" style="left:440.0px;top:69.0px;width:2.6px;height:0.7px;background:#7080a0;"></div>
<div class="a" style="left:443.8px;top:69.3px;width:4px;height:0.8px;background:#c0c0c0;"></div>
<div class="tt" style="left:457.8px;top:66.79px;font-size:6.45px;line-height:6.45px;color:#1a1a1a;">..</div>
<svg class="a" style="left:457.5px;top:74.5px" width="9" height="8"><path d="M0.5 1.5 h3 l1 1 h3.5 v5 h-7.5z" fill="#e0b040"/><path d="M1.5 3.5 h7 l-1 4 h-6.5z" fill="#f8d870"/></svg>
<div class="a" style="left:448.5px;top:76.0px;width:5px;height:5px;border:0.8px solid #a0a0a0;background:#fff"></div>
<div class="a" style="left:449.7px;top:78.2px;width:2.6px;height:0.7px;background:#7080a0;"></div>
<div class="a" style="left:450.65px;top:77.2px;width:0.7px;height:2.6px;background:#7080a0;"></div>
<div class="a" style="left:453.5px;top:78.5px;width:4px;height:0.8px;background:#c0c0c0;"></div>
<div class="tt" style="left:467.5px;top:75.99px;font-size:6.45px;line-height:6.45px;color:#1a1a1a;">..</div>
<svg class="a" style="left:457.5px;top:83.6px" width="9" height="8"><path d="M0.5 1.5 h3 l1 1 h3.5 v5 h-7.5z" fill="#e0b040"/><path d="M1.5 3.5 h7 l-1 4 h-6.5z" fill="#f8d870"/></svg>
<div class="a" style="left:448.5px;top:85.1px;width:5px;height:5px;border:0.8px solid #a0a0a0;background:#fff"></div>
<div class="a" style="left:449.7px;top:87.3px;width:2.6px;height:0.7px;background:#7080a0;"></div>
<div class="a" style="left:453.5px;top:87.6px;width:4px;height:0.8px;background:#c0c0c0;"></div>
<div class="tt" style="left:467.5px;top:85.09px;font-size:6.45px;line-height:6.45px;color:#1a1a1a;">source</div>
<svg class="a" style="left:466.6px;top:92.10000000000001px" width="7" height="9"><path d="M0.5 0.5 h4 l2 2 v6 h-6z" fill="#fff" stroke="#a8a8a8" stroke-width="0.7"/></svg>
<div class="a" style="left:459.6px;top:96.4px;width:6px;height:0.8px;background:#c0c0c0;"></div>
<div class="tt" style="left:476.6px;top:93.89px;font-size:6.45px;line-height:6.45px;color:#1a1a1a;">smpl_adc12.c</div>
<svg class="a" style="left:466.6px;top:101.2px" width="7" height="9"><path d="M0.5 0.5 h4 l2 2 v6 h-6z" fill="#fff" stroke="#a8a8a8" stroke-width="0.7"/></svg>
<div class="a" style="left:459.6px;top:105.5px;width:6px;height:0.8px;background:#c0c0c0;"></div>
<div class="tt" style="left:476.6px;top:102.99px;font-size:6.45px;line-height:6.45px;color:#1a1a1a;">smpl_main.c</div>
<svg class="a" style="left:466.6px;top:110.3px" width="7" height="9"><path d="M0.5 0.5 h4 l2 2 v6 h-6z" fill="#fff" stroke="#a8a8a8" stroke-width="0.7"/></svg>
<div class="a" style="left:459.6px;top:114.6px;width:6px;height:0.8px;background:#c0c0c0;"></div>
<div class="tt" style="left:476.6px;top:112.09px;font-size:6.45px;line-height:6.45px;color:#1a1a1a;">smpl_pwm.c</div>
<svg class="a" style="left:466.6px;top:119.10000000000001px" width="7" height="9"><path d="M0.5 0.5 h4 l2 2 v6 h-6z" fill="#fff" stroke="#a8a8a8" stroke-width="0.7"/></svg>
<div class="a" style="left:459.6px;top:123.4px;width:6px;height:0.8px;background:#c0c0c0;"></div>
<div class="tt" style="left:476.6px;top:120.89px;font-size:6.45px;line-height:6.45px;color:#1a1a1a;">smpl_uart.c</div>
<svg class="a" style="left:438px;top:128.6px" width="9" height="8"><path d="M0.5 1.5 h3 l1 1 h3.5 v5 h-7.5z" fill="#e0b040"/><path d="M1.5 3.5 h7 l-1 4 h-6.5z" fill="#f8d870"/></svg>
<div class="a" style="left:429px;top:130.1px;width:5px;height:5px;border:0.8px solid #a0a0a0;background:#fff"></div>
<div class="a" style="left:430.2px;top:132.29999999999998px;width:2.6px;height:0.7px;background:#7080a0;"></div>
<div class="a" style="left:431.15px;top:131.29999999999998px;width:0.7px;height:2.6px;background:#7080a0;"></div>
<div class="a" style="left:434px;top:132.6px;width:4px;height:0.8px;background:#c0c0c0;"></div>
<div class="tt" style="left:448px;top:130.09px;font-size:6.45px;line-height:6.45px;color:#1a1a1a;">Headers</div>
<svg class="a" style="left:438px;top:137.4px" width="9" height="8"><path d="M0.5 1.5 h3 l1 1 h3.5 v5 h-7.5z" fill="#e0b040"/><path d="M1.5 3.5 h7 l-1 4 h-6.5z" fill="#f8d870"/></svg>
<div class="a" style="left:429px;top:138.9px;width:5px;height:5px;border:0.8px solid #a0a0a0;background:#fff"></div>
<div class="a" style="left:430.2px;top:141.1px;width:2.6px;height:0.7px;background:#7080a0;"></div>
<div class="a" style="left:434px;top:141.4px;width:4px;height:0.8px;background:#c0c0c0;"></div>
<div class="tt" style="left:448px;top:138.89px;font-size:6.45px;line-height:6.45px;color:#1a1a1a;">ASM Sources</div>
<svg class="a" style="left:447.8px;top:146.2px" width="7" height="9"><path d="M0.5 0.5 h4 l2 2 v6 h-6z" fill="#fff" stroke="#a8a8a8" stroke-width="0.7"/></svg>
<div class="a" style="left:440.8px;top:150.5px;width:6px;height:0.8px;background:#c0c0c0;"></div>
<div class="tt" style="left:457.8px;top:147.99px;font-size:6.45px;line-height:6.45px;color:#1a1a1a;">startup_mb9bf51x.s</div>
<svg class="a" style="left:438px;top:155.3px" width="9" height="8"><path d="M0.5 1.5 h3 l1 1 h3.5 v5 h-7.5z" fill="#e0b040"/><path d="M1.5 3.5 h7 l-1 4 h-6.5z" fill="#f8d870"/></svg>
<div class="a" style="left:429px;top:156.8px;width:5px;height:5px;border:0.8px solid #a0a0a0;background:#fff"></div>
<div class="a" style="left:430.2px;top:159.0px;width:2.6px;height:0.7px;background:#7080a0;"></div>
<div class="a" style="left:431.15px;top:158.0px;width:0.7px;height:2.6px;background:#7080a0;"></div>
<div class="a" style="left:434px;top:159.3px;width:4px;height:0.8px;background:#c0c0c0;"></div>
<div class="tt" style="left:448px;top:156.79px;font-size:6.45px;line-height:6.45px;color:#1a1a1a;">Others</div>
<div class="a" style="left:645px;top:48px;width:9px;height:116px;background:#f0f0f0;"></div>
<div class="a" style="left:646px;top:62px;width:7px;height:84px;background:#cdcdcd;"></div>
<svg class="a" style="left:646px;top:49px" width="7" height="5"><path d="M1 4 L3.5 1.5 L6 4" stroke="#555" fill="none" stroke-width="1"/></svg>
<svg class="a" style="left:646px;top:157px" width="7" height="5"><path d="M1 1 L3.5 3.5 L6 1" stroke="#555" fill="none" stroke-width="1"/></svg>
<div class="a" style="left:408px;top:164.5px;width:37.5px;height:11px;background:#f4f5f5;"></div>
<svg class="a" style="left:410.5px;top:166px" width="9" height="9"><path d="M1 8 L7 1" stroke="#707070" stroke-width="1"/><path d="M1.5 2 L7.5 8" stroke="#909090" stroke-width="1"/><rect x="2.5" y="4.5" width="4" height="3" fill="#e0c070"/></svg>
<div class="tt" style="left:419px;top:167.02px;font-size:6.4px;line-height:6.4px;color:#1a1a1a;">Projects</div>
<svg class="a" style="left:450px;top:166px" width="9" height="9"><circle cx="4.5" cy="4.5" r="3.3" fill="none" stroke="#d03030" stroke-width="2"/><path d="M4.5 1.2 A3.3 3.3 0 0 1 7.8 4.5" stroke="#30a040" stroke-width="2" fill="none"/><path d="M7.8 4.5 A3.3 3.3 0 0 1 4.5 7.8" stroke="#7040c0" stroke-width="2" fill="none"/></svg>
<div class="tt" style="left:459px;top:167.02px;font-size:6.4px;line-height:6.4px;color:#f0f0f0;">Symbols</div>
<svg class="a" style="left:490.5px;top:166px" width="9" height="9"><rect x="1" y="1" width="7" height="7.5" rx="1" fill="#48a0e8"/><rect x="2.5" y="3" width="4" height="3.5" fill="#e8f4ff"/></svg>
<div class="tt" style="left:500px;top:167.02px;font-size:6.4px;line-height:6.4px;color:#f0f0f0;">Files</div>
<svg class="a" style="left:647px;top:168px" width="5" height="4"><path d="M0 0 L5 0 L2.5 3z" fill="#ddd"/></svg>
<div class="a" style="left:408px;top:180.8px;width:246px;height:7.8px;background:linear-gradient(#fdf0c0,#f3d88a);"></div>
<div class="tt" style="left:409.5px;top:182.23px;font-size:5.3px;line-height:5.3px;color:#202020;">Disassembly</div>
<svg class="a" style="left:645px;top:181px" width="7" height="7"><path d="M1 1 L6 6 M6 1 L1 6" stroke="#222" stroke-width="1"/></svg>
<div class="a" style="left:408px;top:188px;width:246px;height:129.5px;background:#f0f0f0;"></div>
<div class="tt" style="left:408.8px;top:189.83px;font-size:6.2px;line-height:6.2px;color:#111;">Function:</div>
<div class="tt" style="left:443.4px;top:189.83px;font-size:6.2px;line-height:6.2px;color:#111;">main</div>
<div class="tt" style="left:408.8px;top:197.97px;font-size:6.3px;line-height:6.3px;color:#111;">Frame start: 0x1fff1d78</div>
<div class="a" style="left:408.5px;top:204px;width:236.5px;height:87px;background:#f5f6f6;border-left:1px solid #b4b4b4;border-top:1px solid #b4b4b4"></div>
<div class="a" style="left:409px;top:280px;width:236px;height:6.5px;background:#e4e4e4;"></div>
<div class="a" style="left:409px;top:205px;width:236px;height:86px;overflow:hidden">
<div class="tt" style="left:8px;top:1.6000000000000056px;font:5.8px/6px 'Liberation Mono',monospace;color:#c83030">000092B8</div>
<div class="tt" style="left:64px;top:1.6000000000000056px;font:italic bold 5.8px/6px 'Liberation Mono',monospace;color:#202020">movw</div>
<div class="tt" style="left:92px;top:1.6000000000000056px;font:5.8px/6px 'Liberation Mono',monospace;color:#e89020">r3, <span style="color:#202020;font-weight:bold">#6436</span></div>
<div class="tt" style="left:148px;top:1.6000000000000056px;font:5.8px/6px 'Liberation Mono',monospace;color:#a8a8a8">; 0x1924</div>
<div class="tt" style="left:8px;top:9.049999999999994px;font:5.8px/6px 'Liberation Mono',monospace;color:#c83030">000092BC</div>
<div class="tt" style="left:64px;top:9.049999999999994px;font:italic bold 5.8px/6px 'Liberation Mono',monospace;color:#202020">movt</div>
<div class="tt" style="left:92px;top:9.049999999999994px;font:5.8px/6px 'Liberation Mono',monospace;color:#e89020">r3, <span style="color:#202020;font-weight:bold">#8191</span></div>
<div class="tt" style="left:148px;top:9.049999999999994px;font:5.8px/6px 'Liberation Mono',monospace;color:#a8a8a8">; 0x1fff</div>
<div class="tt" style="left:8px;top:16.50000000000001px;font:5.8px/6px 'Liberation Mono',monospace;color:#c83030">000092C0</div>
<div class="tt" style="left:64px;top:16.50000000000001px;font:italic bold 5.8px/6px 'Liberation Mono',monospace;color:#202020">mov.w</div>
<div class="tt" style="left:92px;top:16.50000000000001px;font:5.8px/6px 'Liberation Mono',monospace;color:#e89020">r2, <span style="color:#202020;font-weight:bold">#0</span></div>
<div class="tt" style="left:8px;top:23.95px;font:5.8px/6px 'Liberation Mono',monospace;color:#c83030">000092C4</div>
<div class="tt" style="left:64px;top:23.95px;font:italic bold 5.8px/6px 'Liberation Mono',monospace;color:#202020">str</div>
<div class="tt" style="left:92px;top:23.95px;font:5.8px/6px 'Liberation Mono',monospace;color:#e89020">r2, <span style="color:#e03020">[</span>r3, <span style="color:#202020;font-weight:bold">#0</span><span style="color:#e03020">]</span></div>
<div class="tt" style="left:8px;top:31.400000000000016px;font:italic 5.8px/6px 'Liberation Mono',monospace;color:#7aa8e0">(128)</div>
<div class="tt" style="left:61px;top:31.400000000000016px;font:italic 5.8px/6px 'Liberation Mono',monospace;color:#7aa8e0">}</div>
<div class="tt" style="left:8px;top:38.85000000000001px;font:italic 5.8px/6px 'Liberation Mono',monospace;color:#7aa8e0">(129)</div>
<div class="tt" style="left:61px;top:38.85000000000001px;font:italic 5.8px/6px 'Liberation Mono',monospace;color:#7aa8e0">/* check the sound selection switch */</div>
<div class="tt" style="left:8px;top:46.300000000000026px;font:italic 5.8px/6px 'Liberation Mono',monospace;color:#7aa8e0">(130)</div>
<div class="tt" style="left:61px;top:46.300000000000026px;font:italic 5.8px/6px 'Liberation Mono',monospace;color:#7aa8e0">if (1 == bFM3_GPIO_PDIR1_P8)</div>
<div class="tt" style="left:8px;top:53.750000000000014px;font:5.8px/6px 'Liberation Mono',monospace;color:#c83030">000092C6</div>
<div class="tt" style="left:64px;top:53.750000000000014px;font:italic bold 5.8px/6px 'Liberation Mono',monospace;color:#202020">movw</div>
<div class="tt" style="left:92px;top:53.750000000000014px;font:5.8px/6px 'Liberation Mono',monospace;color:#e89020">r3, <span style="color:#202020;font-weight:bold">#24736</span></div>
<div class="tt" style="left:148px;top:53.750000000000014px;font:5.8px/6px 'Liberation Mono',monospace;color:#a8a8a8">; 0x60a0</div>
<div class="tt" style="left:8px;top:61.2px;font:5.8px/6px 'Liberation Mono',monospace;color:#c83030">000092CA</div>
<div class="tt" style="left:64px;top:61.2px;font:italic bold 5.8px/6px 'Liberation Mono',monospace;color:#202020">movt</div>
<div class="tt" style="left:92px;top:61.2px;font:5.8px/6px 'Liberation Mono',monospace;color:#e89020">r3, <span style="color:#202020;font-weight:bold">#16998</span></div>
<div class="tt" style="left:148px;top:61.2px;font:5.8px/6px 'Liberation Mono',monospace;color:#a8a8a8">; 0x4266</div>
<div class="tt" style="left:8px;top:68.64999999999999px;font:5.8px/6px 'Liberation Mono',monospace;color:#c83030">000092CE</div>
<div class="tt" style="left:64px;top:68.64999999999999px;font:italic bold 5.8px/6px 'Liberation Mono',monospace;color:#202020">ldr</div>
<div class="tt" style="left:92px;top:68.64999999999999px;font:5.8px/6px 'Liberation Mono',monospace;color:#e89020">r3, <span style="color:#e03020">[</span>r3, <span style="color:#202020;font-weight:bold">#0</span><span style="color:#e03020">]</span></div>
<div class="tt" style="left:8px;top:76.09999999999998px;font:5.8px/6px 'Liberation Mono',monospace;color:#c83030">000092D0</div>
<div class="tt" style="left:64px;top:76.09999999999998px;font:italic bold 5.8px/6px 'Liberation Mono',monospace;color:#202020">cmp</div>
<div class="tt" style="left:92px;top:76.09999999999998px;font:5.8px/6px 'Liberation Mono',monospace;color:#e89020">r3, <span style="color:#202020;font-weight:bold">#1</span></div>
<div class="tt" style="left:8px;top:83.55000000000003px;font:5.8px/6px 'Liberation Mono',monospace;color:#c83030">000092D2</div>
<div class="tt" style="left:64px;top:83.55000000000003px;font:italic bold 5.8px/6px 'Liberation Mono',monospace;color:#202020">bne.w</div>
<div class="tt" style="left:92px;top:83.55000000000003px;font:5.8px/6px 'Liberation Mono',monospace;color:#e89020">0x92f0 &lt;main+526&gt;</div>
</div>
<svg class="a" style="left:410.5px;top:280px" width="6" height="7"><path d="M0.5 0.8 h3 l2 2.5 l-2 2.5 h-3z" fill="#f0e818" stroke="#807000" stroke-width="0.6"/></svg>
<div class="a" style="left:645px;top:205px;width:8px;height:86px;background:#f0f0f0;"></div>
<div class="a" style="left:646px;top:262.5px;width:6px;height:8px;background:#c8c8c8;"></div>
<div class="a" style="left:409px;top:291px;width:245px;height:7.5px;background:#f0f0f0;"></div>
<div class="a" style="left:416.7px;top:292px;width:49.6px;height:6px;background:#c8c8c8;"></div>
<svg class="a" style="left:411px;top:292px" width="5" height="6"><path d="M3.5 1 L1.5 3 L3.5 5" stroke="#555" fill="none" stroke-width="0.9"/></svg>
<svg class="a" style="left:639px;top:292px" width="5" height="6"><path d="M1.5 1 L3.5 3 L1.5 5" stroke="#555" fill="none" stroke-width="0.9"/></svg>
<svg class="a" style="left:646px;top:284px" width="7" height="5"><path d="M1 1 L3.5 3.5 L6 1" stroke="#555" fill="none" stroke-width="1"/></svg>
<svg class="a" style="left:646px;top:206px" width="7" height="5"><path d="M1 4 L3.5 1.5 L6 4" stroke="#555" fill="none" stroke-width="1"/></svg>
<div class="a" style="left:412.5px;top:305.5px;width:6px;height:6px;background:#fff;border:1px solid #333"></div>
<div class="tt" style="left:413px;top:304.5px;font-size:6px;line-height:6px;color:#111;">✓</div>
<div class="tt" style="left:420.7px;top:305.53px;font-size:6.2px;line-height:6.2px;color:#1a1a1a;">Mixed mode view</div>
<div class="tt" style="left:479.6px;top:305.64px;font-size:6.0px;line-height:6.0px;color:#1a1a1a;">Address:</div>
<div class="a" style="left:506.4px;top:303.6px;width:94.8px;height:10.4px;background:#fbfbfb;border:1px solid #b8b8b8"></div>
<div class="tt" style="left:509px;top:305.53px;font-size:6.2px;line-height:6.2px;color:#1a1a1a;">0x00009080</div>
<div class="a" style="left:408px;top:321.5px;width:246.5px;height:9px;background:#42577f;"></div>
<div class="tt" style="left:409.5px;top:323.29px;font-size:5.2px;line-height:5.2px;color:#f0f0f0;">CPU Registers</div>
<svg class="a" style="left:645px;top:322.5px" width="7" height="7"><path d="M1 1 L6 6 M6 1 L1 6" stroke="#fff" stroke-width="1"/></svg>
<div class="a" style="left:408px;top:330.5px;width:246.5px;height:129px;background:#f7f7f7;"></div>
<div class="tt" style="left:411.5px;top:332.3px;font:5.8px/6px 'Liberation Mono',monospace;color:#333;transform:scaleX(0.875);transform-origin:0 0">Register</div>
<div class="tt" style="left:453.5px;top:332.3px;font:5.8px/6px 'Liberation Mono',monospace;color:#333;transform:scaleX(0.875);transform-origin:0 0">Hex</div>
<div class="tt" style="left:499px;top:332.3px;font:5.8px/6px 'Liberation Mono',monospace;color:#333;transform:scaleX(0.875);transform-origin:0 0">Decimal</div>
<div class="tt" style="left:418px;top:341.8px;font:5.8px/6px 'Liberation Mono',monospace;color:#303030;transform:scaleX(0.875);transform-origin:0 0">r0</div>
<div class="tt" style="left:452.5px;top:341.8px;font:5.8px/6px 'Liberation Mono',monospace;color:#303030;transform:scaleX(0.875);transform-origin:0 0">0x0</div>
<div class="tt" style="left:498px;top:341.8px;font:5.8px/6px 'Liberation Mono',monospace;color:#303030;transform:scaleX(0.875);transform-origin:0 0">0</div>
<div class="tt" style="left:418px;top:349.26px;font:5.8px/6px 'Liberation Mono',monospace;color:#d83030;transform:scaleX(0.875);transform-origin:0 0">r1</div>
<div class="tt" style="left:452.5px;top:349.26px;font:5.8px/6px 'Liberation Mono',monospace;color:#d83030;transform:scaleX(0.875);transform-origin:0 0">0x1197C</div>
<div class="tt" style="left:498px;top:349.26px;font:5.8px/6px 'Liberation Mono',monospace;color:#d83030;transform:scaleX(0.875);transform-origin:0 0">72060</div>
<div class="tt" style="left:418px;top:356.72px;font:5.8px/6px 'Liberation Mono',monospace;color:#303030;transform:scaleX(0.875);transform-origin:0 0">r2</div>
<div class="tt" style="left:452.5px;top:356.72px;font:5.8px/6px 'Liberation Mono',monospace;color:#303030;transform:scaleX(0.875);transform-origin:0 0">0x0</div>
<div class="tt" style="left:498px;top:356.72px;font:5.8px/6px 'Liberation Mono',monospace;color:#303030;transform:scaleX(0.875);transform-origin:0 0">0</div>
<div class="tt" style="left:418px;top:364.18px;font:5.8px/6px 'Liberation Mono',monospace;color:#303030;transform:scaleX(0.875);transform-origin:0 0">r3</div>
<div class="tt" style="left:452.5px;top:364.18px;font:5.8px/6px 'Liberation Mono',monospace;color:#303030;transform:scaleX(0.875);transform-origin:0 0">0x0</div>
<div class="tt" style="left:498px;top:364.18px;font:5.8px/6px 'Liberation Mono',monospace;color:#303030;transform:scaleX(0.875);transform-origin:0 0">0</div>
<div class="tt" style="left:418px;top:371.64px;font:5.8px/6px 'Liberation Mono',monospace;color:#303030;transform:scaleX(0.875);transform-origin:0 0">r4</div>
<div class="tt" style="left:452.5px;top:371.64px;font:5.8px/6px 'Liberation Mono',monospace;color:#303030;transform:scaleX(0.875);transform-origin:0 0">0x0</div>
<div class="tt" style="left:498px;top:371.64px;font:5.8px/6px 'Liberation Mono',monospace;color:#303030;transform:scaleX(0.875);transform-origin:0 0">0</div>
<div class="tt" style="left:418px;top:379.1px;font:5.8px/6px 'Liberation Mono',monospace;color:#303030;transform:scaleX(0.875);transform-origin:0 0">r5</div>
<div class="tt" style="left:452.5px;top:379.1px;font:5.8px/6px 'Liberation Mono',monospace;color:#303030;transform:scaleX(0.875);transform-origin:0 0">0x0</div>
<div class="tt" style="left:498px;top:379.1px;font:5.8px/6px 'Liberation Mono',monospace;color:#303030;transform:scaleX(0.875);transform-origin:0 0">0</div>
<div class="tt" style="left:418px;top:386.56px;font:5.8px/6px 'Liberation Mono',monospace;color:#303030;transform:scaleX(0.875);transform-origin:0 0">r6</div>
<div class="tt" style="left:452.5px;top:386.56px;font:5.8px/6px 'Liberation Mono',monospace;color:#303030;transform:scaleX(0.875);transform-origin:0 0">0x0</div>
<div class="tt" style="left:498px;top:386.56px;font:5.8px/6px 'Liberation Mono',monospace;color:#303030;transform:scaleX(0.875);transform-origin:0 0">0</div>
<div class="tt" style="left:418px;top:394.02000000000004px;font:5.8px/6px 'Liberation Mono',monospace;color:#d83030;transform:scaleX(0.875);transform-origin:0 0">r7</div>
<div class="tt" style="left:452.5px;top:394.02000000000004px;font:5.8px/6px 'Liberation Mono',monospace;color:#d83030;transform:scaleX(0.875);transform-origin:0 0">0x1FFF1D70</div>
<div class="tt" style="left:498px;top:394.02000000000004px;font:5.8px/6px 'Liberation Mono',monospace;color:#d83030;transform:scaleX(0.875);transform-origin:0 0">536812912</div>
<div class="tt" style="left:418px;top:401.48px;font:5.8px/6px 'Liberation Mono',monospace;color:#303030;transform:scaleX(0.875);transform-origin:0 0">r8</div>
<div class="tt" style="left:452.5px;top:401.48px;font:5.8px/6px 'Liberation Mono',monospace;color:#303030;transform:scaleX(0.875);transform-origin:0 0">0x0</div>
<div class="tt" style="left:498px;top:401.48px;font:5.8px/6px 'Liberation Mono',monospace;color:#303030;transform:scaleX(0.875);transform-origin:0 0">0</div>
<div class="tt" style="left:418px;top:408.94px;font:5.8px/6px 'Liberation Mono',monospace;color:#303030;transform:scaleX(0.875);transform-origin:0 0">r9</div>
<div class="tt" style="left:452.5px;top:408.94px;font:5.8px/6px 'Liberation Mono',monospace;color:#303030;transform:scaleX(0.875);transform-origin:0 0">0x0</div>
<div class="tt" style="left:498px;top:408.94px;font:5.8px/6px 'Liberation Mono',monospace;color:#303030;transform:scaleX(0.875);transform-origin:0 0">0</div>
<div class="tt" style="left:418px;top:416.40000000000003px;font:5.8px/6px 'Liberation Mono',monospace;color:#303030;transform:scaleX(0.875);transform-origin:0 0">r10</div>
<div class="tt" style="left:452.5px;top:416.40000000000003px;font:5.8px/6px 'Liberation Mono',monospace;color:#303030;transform:scaleX(0.875);transform-origin:0 0">0x0</div>
<div class="tt" style="left:498px;top:416.40000000000003px;font:5.8px/6px 'Liberation Mono',monospace;color:#303030;transform:scaleX(0.875);transform-origin:0 0">0</div>
<div class="tt" style="left:418px;top:423.86px;font:5.8px/6px 'Liberation Mono',monospace;color:#303030;transform:scaleX(0.875);transform-origin:0 0">r11</div>
<div class="tt" style="left:452.5px;top:423.86px;font:5.8px/6px 'Liberation Mono',monospace;color:#303030;transform:scaleX(0.875);transform-origin:0 0">0x0</div>
<div class="tt" style="left:498px;top:423.86px;font:5.8px/6px 'Liberation Mono',monospace;color:#303030;transform:scaleX(0.875);transform-origin:0 0">0</div>
<div class="tt" style="left:418px;top:431.32px;font:5.8px/6px 'Liberation Mono',monospace;color:#d83030;transform:scaleX(0.875);transform-origin:0 0">r12</div>
<div class="tt" style="left:452.5px;top:431.32px;font:5.8px/6px 'Liberation Mono',monospace;color:#d83030;transform:scaleX(0.875);transform-origin:0 0">0x13</div>
<div class="tt" style="left:498px;top:431.32px;font:5.8px/6px 'Liberation Mono',monospace;color:#d83030;transform:scaleX(0.875);transform-origin:0 0">19</div>
<div class="tt" style="left:418px;top:438.78000000000003px;font:5.8px/6px 'Liberation Mono',monospace;color:#d83030;transform:scaleX(0.875);transform-origin:0 0">sp</div>
<div class="tt" style="left:452.5px;top:438.78000000000003px;font:5.8px/6px 'Liberation Mono',monospace;color:#d83030;transform:scaleX(0.875);transform-origin:0 0">0x1FFF1D70</div>
<div class="tt" style="left:498px;top:438.78000000000003px;font:5.8px/6px 'Liberation Mono',monospace;color:#d83030;transform:scaleX(0.875);transform-origin:0 0">536812912</div>
<div class="tt" style="left:418px;top:446.24px;font:5.8px/6px 'Liberation Mono',monospace;color:#d83030;transform:scaleX(0.875);transform-origin:0 0">lr</div>
<div class="tt" style="left:452.5px;top:446.24px;font:5.8px/6px 'Liberation Mono',monospace;color:#d83030;transform:scaleX(0.875);transform-origin:0 0">0x80DF</div>
<div class="tt" style="left:498px;top:446.24px;font:5.8px/6px 'Liberation Mono',monospace;color:#d83030;transform:scaleX(0.875);transform-origin:0 0">32991</div>
<div class="tt" style="left:418px;top:453.7px;font:5.8px/6px 'Liberation Mono',monospace;color:#d83030;transform:scaleX(0.875);transform-origin:0 0">pc</div>
<div class="tt" style="left:452.5px;top:453.7px;font:5.8px/6px 'Liberation Mono',monospace;color:#d83030;transform:scaleX(0.875);transform-origin:0 0">0x92D0</div>
<div class="tt" style="left:498px;top:453.7px;font:5.8px/6px 'Liberation Mono',monospace;color:#d83030;transform:scaleX(0.875);transform-origin:0 0">37584</div>
<div class="a" style="left:645px;top:339px;width:8px;height:120px;background:#f0f0f0;"></div>
<div class="a" style="left:646px;top:348.5px;width:6px;height:86.5px;background:#cdcdcd;"></div>
<svg class="a" style="left:646px;top:342px" width="7" height="5"><path d="M1 4 L3.5 1.5 L6 4" stroke="#555" fill="none" stroke-width="1"/></svg>
<svg class="a" style="left:646px;top:453px" width="7" height="5"><path d="M1 1 L3.5 3.5 L6 1" stroke="#555" fill="none" stroke-width="1"/></svg>
<div class="a" style="left:657.5px;top:40px;width:46px;height:10.5px;background:linear-gradient(#fff8e0,#f7e6a8);"></div>
<div class="a" style="left:657.5px;top:47.5px;width:261px;height:3px;background:#f5d878;"></div>
<div class="tt" style="left:660px;top:41.75px;font-size:5.8px;line-height:5.8px;color:#1a1a1a;">smpl_main.c</div>
<svg class="a" style="left:696px;top:42.5px" width="5" height="5"><path d="M0.5 0.5 L4.5 4.5 M4.5 0.5 L0.5 4.5" stroke="#666" stroke-width="0.7"/></svg>
<div class="tt" style="left:708px;top:41.70px;font-size:5.9px;line-height:5.9px;color:#f0f0f0;">Adc12Dev_FM3.c</div>
<div class="tt" style="left:769px;top:41.70px;font-size:5.9px;line-height:5.9px;color:#f0f0f0;">smpl_uart.h</div>
<div class="tt" style="left:815px;top:41.70px;font-size:5.9px;line-height:5.9px;color:#f0f0f0;">smpl_uart.c</div>
<svg class="a" style="left:914px;top:43px" width="5" height="4"><path d="M0 0 L5 0 L2.5 3z" fill="#ddd"/></svg>
<div class="a" style="left:657.5px;top:50.5px;width:263px;height:269.5px;background:#f4f5f5;"></div>
<div class="a" style="left:702px;top:277.5px;width:209px;height:7px;background:#e8e8e8;"></div>
<div class="a" style="left:657.5px;top:50.5px;width:256px;height:261px;overflow:hidden">
<div class="tt" style="left:13px;top:3.1000000000000028px;font:bold 5.9px/6.4px 'Liberation Mono',monospace;color:#303030">100</div>
<div class="tt" style="left:43px;top:3.1000000000000028px;font:bold 5.85px/6.4px 'Liberation Mono',monospace">    <span style="color:#141414">FM3_GPIO</span><span style="color:#d82020">-&gt;</span><span style="color:#141414">PFR5</span> <span style="color:#d82020">=</span> <span style="color:#141414">FM3_GPIO</span><span style="color:#d82020">-&gt;</span><span style="color:#141414">PFR5</span> <span style="color:#d82020">|</span> <span style="color:#e020d8">0x000F</span><span style="color:#d82020">;</span>  <span style="color:#a8a8a8">/* Use INT00_</span></div>
<div class="tt" style="left:13px;top:10.600000000000003px;font:bold 5.9px/6.4px 'Liberation Mono',monospace;color:#303030">101</div>
<div class="tt" style="left:43px;top:10.600000000000003px;font:bold 5.85px/6.4px 'Liberation Mono',monospace">    <span style="color:#141414">FM3_GPIO</span><span style="color:#d82020">-&gt;</span><span style="color:#141414">PFR6</span> <span style="color:#d82020">=</span> <span style="color:#141414">FM3_GPIO</span><span style="color:#d82020">-&gt;</span><span style="color:#141414">PFR6</span> <span style="color:#d82020">|</span> <span style="color:#e020d8">0x0008</span><span style="color:#d82020">;</span>  <span style="color:#a8a8a8">/* Use INT03_</span></div>
<div class="tt" style="left:13px;top:18.1px;font:bold 5.9px/6.4px 'Liberation Mono',monospace;color:#303030">102</div>
<div class="tt" style="left:43px;top:18.1px;font:bold 5.85px/6.4px 'Liberation Mono',monospace">    <span style="color:#141414">FM3_GPIO</span><span style="color:#d82020">-&gt;</span><span style="color:#141414">EPFR06</span> <span style="color:#d82020">=</span> <span style="color:#d82020">(</span><span style="color:#141414">FM3_GPIO</span><span style="color:#d82020">-&gt;</span><span style="color:#141414">EPFR06</span> <span style="color:#d82020">&amp;</span> <span style="color:#e020d8">0xFFFF0000</span><span style="color:#d82020">)</span> <span style="color:#d82020">|</span> <span style="color:#e020d8">0x0</span></div>
<div class="tt" style="left:13px;top:25.6px;font:bold 5.9px/6.4px 'Liberation Mono',monospace;color:#303030">103</div>
<div class="tt" style="left:43px;top:25.6px;font:bold 5.85px/6.4px 'Liberation Mono',monospace">    <span style="color:#a8a8a8">/* Set BaseTimer */</span></div>
<div class="tt" style="left:13px;top:33.1px;font:bold 5.9px/6.4px 'Liberation Mono',monospace;color:#303030">104</div>
<div class="tt" style="left:43px;top:33.1px;font:bold 5.85px/6.4px 'Liberation Mono',monospace">    <span style="color:#141414">FM3_GPIO</span><span style="color:#d82020">-&gt;</span><span style="color:#141414">PFR4</span> <span style="color:#d82020">=</span> <span style="color:#141414">FM3_GPIO</span><span style="color:#d82020">-&gt;</span><span style="color:#141414">PFR4</span> <span style="color:#d82020">|</span> <span style="color:#e020d8">0x0001</span><span style="color:#d82020">;</span>  <span style="color:#a8a8a8">/* Use P40 */</span></div>
<div class="tt" style="left:13px;top:40.6px;font:bold 5.9px/6.4px 'Liberation Mono',monospace;color:#303030">105</div>
<div class="tt" style="left:43px;top:40.6px;font:bold 5.85px/6.4px 'Liberation Mono',monospace">    <span style="color:#141414">FM3_GPIO</span><span style="color:#d82020">-&gt;</span><span style="color:#141414">DDR4</span> <span style="color:#d82020">=</span> <span style="color:#141414">FM3_GPIO</span><span style="color:#d82020">-&gt;</span><span style="color:#141414">DDR4</span> <span style="color:#d82020">|</span> <span style="color:#e020d8">0x0001</span><span style="color:#d82020">;</span>  <span style="color:#a8a8a8">/* Output Bas</span></div>
<div class="tt" style="left:13px;top:48.1px;font:bold 5.9px/6.4px 'Liberation Mono',monospace;color:#303030">106</div>
<div class="tt" style="left:43px;top:48.1px;font:bold 5.85px/6.4px 'Liberation Mono',monospace">    <span style="color:#141414">FM3_GPIO</span><span style="color:#d82020">-&gt;</span><span style="color:#141414">EPFR04</span> <span style="color:#d82020">=</span> <span style="color:#d82020">(</span><span style="color:#141414">FM3_GPIO</span><span style="color:#d82020">-&gt;</span><span style="color:#141414">EPFR04</span> <span style="color:#d82020">&amp;</span> <span style="color:#e020d8">0xFFFFFFF0</span><span style="color:#d82020">)</span> <span style="color:#d82020">|</span> <span style="color:#e020d8">0x0</span></div>
<div class="tt" style="left:13px;top:55.6px;font:bold 5.9px/6.4px 'Liberation Mono',monospace;color:#303030">107</div>
<div class="tt" style="left:43px;top:55.6px;font:bold 5.85px/6.4px 'Liberation Mono',monospace"></div>
<div class="tt" style="left:13px;top:63.1px;font:bold 5.9px/6.4px 'Liberation Mono',monospace;color:#303030">108</div>
<div class="tt" style="left:43px;top:63.1px;font:bold 5.85px/6.4px 'Liberation Mono',monospace"></div>
<div class="tt" style="left:13px;top:70.60000000000001px;font:bold 5.9px/6.4px 'Liberation Mono',monospace;color:#303030">109</div>
<div class="tt" style="left:43px;top:70.60000000000001px;font:bold 5.85px/6.4px 'Liberation Mono',monospace">    <span style="color:#a8a8a8">/* Disable ExtInt 0-7 */</span></div>
<div class="tt" style="left:13px;top:78.1px;font:bold 5.9px/6.4px 'Liberation Mono',monospace;color:#303030">110</div>
<div class="tt" style="left:43px;top:78.1px;font:bold 5.85px/6.4px 'Liberation Mono',monospace">    <span style="color:#141414">FM3_EXTI</span><span style="color:#d82020">-&gt;</span><span style="color:#141414">ENIR</span> <span style="color:#d82020">=</span> <span style="color:#141414">FM3_EXTI</span><span style="color:#d82020">-&gt;</span><span style="color:#141414">ENIR</span> <span style="color:#d82020">&amp;</span> <span style="color:#e020d8">0xFFFFFF00</span><span style="color:#d82020">;</span></div>
<div class="tt" style="left:13px;top:85.6px;font:bold 5.9px/6.4px 'Liberation Mono',monospace;color:#303030">111</div>
<div class="tt" style="left:43px;top:85.6px;font:bold 5.85px/6.4px 'Liberation Mono',monospace">    <span style="color:#a8a8a8">/* Pos Edge Detect ExtInt 0-3: LBx=1,LAx=0 */</span></div>
<div class="tt" style="left:13px;top:93.1px;font:bold 5.9px/6.4px 'Liberation Mono',monospace;color:#303030">112</div>
<div class="tt" style="left:43px;top:93.1px;font:bold 5.85px/6.4px 'Liberation Mono',monospace">    <span style="color:#a8a8a8">/* Neg Edge Detect ExtInt 4-7: LBx=1,LAx=1 */</span></div>
<div class="tt" style="left:13px;top:100.6px;font:bold 5.9px/6.4px 'Liberation Mono',monospace;color:#303030">113</div>
<div class="tt" style="left:43px;top:100.6px;font:bold 5.85px/6.4px 'Liberation Mono',monospace">    <span style="color:#a8a8a8">/* High Detect ExtInt 4-7: LBx=0,LAx=1 */</span></div>
<div class="tt" style="left:13px;top:108.1px;font:bold 5.9px/6.4px 'Liberation Mono',monospace;color:#303030">114</div>
<div class="tt" style="left:43px;top:108.1px;font:bold 5.85px/6.4px 'Liberation Mono',monospace">    <span style="color:#141414">FM3_EXTI</span><span style="color:#d82020">-&gt;</span><span style="color:#141414">ELVR</span> <span style="color:#d82020">=</span> <span style="color:#d82020">(</span><span style="color:#141414">FM3_EXTI</span><span style="color:#d82020">-&gt;</span><span style="color:#141414">ELVR</span> <span style="color:#d82020">&amp;</span> <span style="color:#e020d8">0xFFFF0000</span><span style="color:#d82020">)</span> <span style="color:#d82020">|</span> <span style="color:#e020d8">0x0000FF</span></div>
<div class="tt" style="left:13px;top:115.6px;font:bold 5.9px/6.4px 'Liberation Mono',monospace;color:#303030">115</div>
<div class="tt" style="left:43px;top:115.6px;font:bold 5.85px/6.4px 'Liberation Mono',monospace">    <span style="color:#a8a8a8">/* Interrupt Clear ExtInt 0-7 */</span></div>
<div class="tt" style="left:13px;top:123.1px;font:bold 5.9px/6.4px 'Liberation Mono',monospace;color:#303030">116</div>
<div class="tt" style="left:43px;top:123.1px;font:bold 5.85px/6.4px 'Liberation Mono',monospace">    <span style="color:#141414">FM3_EXTI</span><span style="color:#d82020">-&gt;</span><span style="color:#141414">EICL</span> <span style="color:#d82020">=</span> <span style="color:#141414">FM3_EXTI</span><span style="color:#d82020">-&gt;</span><span style="color:#141414">EICL</span> <span style="color:#d82020">&amp;</span> <span style="color:#e020d8">0xFFFFFF00</span><span style="color:#d82020">;</span></div>
<div class="tt" style="left:13px;top:130.6px;font:bold 5.9px/6.4px 'Liberation Mono',monospace;color:#303030">117</div>
<div class="tt" style="left:43px;top:130.6px;font:bold 5.85px/6.4px 'Liberation Mono',monospace">    <span style="color:#a8a8a8">/* Enable EXTINT0_7 NVIC */</span></div>
<div class="tt" style="left:13px;top:138.1px;font:bold 5.9px/6.4px 'Liberation Mono',monospace;color:#303030">118</div>
<div class="tt" style="left:43px;top:138.1px;font:bold 5.85px/6.4px 'Liberation Mono',monospace">    <span style="color:#141414">NVIC_EnableIRQ</span><span style="color:#d82020">(</span><span style="color:#141414">EXTINT0_7_IRQn</span><span style="color:#d82020">);</span></div>
<div class="tt" style="left:13px;top:145.6px;font:bold 5.9px/6.4px 'Liberation Mono',monospace;color:#303030">119</div>
<div class="tt" style="left:43px;top:145.6px;font:bold 5.85px/6.4px 'Liberation Mono',monospace">    <span style="color:#a8a8a8">/* Enable ExtInt 0-7 */</span></div>
<div class="tt" style="left:13px;top:153.1px;font:bold 5.9px/6.4px 'Liberation Mono',monospace;color:#303030">120</div>
<div class="tt" style="left:43px;top:153.1px;font:bold 5.85px/6.4px 'Liberation Mono',monospace">    <span style="color:#141414">FM3_EXTI</span><span style="color:#d82020">-&gt;</span><span style="color:#141414">ENIR</span> <span style="color:#d82020">=</span> <span style="color:#141414">FM3_EXTI</span><span style="color:#d82020">-&gt;</span><span style="color:#141414">ENIR</span> <span style="color:#d82020">|</span> <span style="color:#e020d8">0x000000FF</span><span style="color:#d82020">;</span></div>
<div class="tt" style="left:13px;top:160.6px;font:bold 5.9px/6.4px 'Liberation Mono',monospace;color:#303030">121</div>
<div class="tt" style="left:43px;top:160.6px;font:bold 5.85px/6.4px 'Liberation Mono',monospace"></div>
<div class="tt" style="left:13px;top:168.1px;font:bold 5.9px/6.4px 'Liberation Mono',monospace;color:#303030">122</div>
<div class="tt" style="left:43px;top:168.1px;font:bold 5.85px/6.4px 'Liberation Mono',monospace">    <span style="color:#141414">Sample_UartInitialMsg</span><span style="color:#d82020">();</span></div>
<div class="tt" style="left:13px;top:175.6px;font:bold 5.9px/6.4px 'Liberation Mono',monospace;color:#303030">123</div>
<div class="tt" style="left:43px;top:175.6px;font:bold 5.85px/6.4px 'Liberation Mono',monospace">    <span style="color:#141414">Sample_UartSoundMsg</span><span style="color:#d82020">();</span></div>
<div class="tt" style="left:13px;top:183.1px;font:bold 5.9px/6.4px 'Liberation Mono',monospace;color:#303030">124</div>
<div class="tt" style="left:43px;top:183.1px;font:bold 5.85px/6.4px 'Liberation Mono',monospace">    <span style="color:#1010c0;font-weight:bold">while</span><span style="color:#d82020">(</span><span style="color:#e020d8">1</span><span style="color:#d82020">){</span></div>
<div class="tt" style="left:13px;top:190.6px;font:bold 5.9px/6.4px 'Liberation Mono',monospace;color:#303030">125</div>
<div class="tt" style="left:43px;top:190.6px;font:bold 5.85px/6.4px 'Liberation Mono',monospace">        <span style="color:#1010c0;font-weight:bold">if</span> <span style="color:#d82020">(</span><span style="color:#e020d8">0</span> <span style="color:#d82020">!=</span> <span style="color:#141414">EIRR</span><span style="color:#d82020">){</span></div>
<div class="tt" style="left:13px;top:198.1px;font:bold 5.9px/6.4px 'Liberation Mono',monospace;color:#303030">126</div>
<div class="tt" style="left:43px;top:198.1px;font:bold 5.85px/6.4px 'Liberation Mono',monospace">            <span style="color:#141414">Sample_UartINTMsg</span><span style="color:#d82020">(</span><span style="color:#141414">EIRR</span><span style="color:#d82020">);</span></div>
<div class="tt" style="left:13px;top:205.6px;font:bold 5.9px/6.4px 'Liberation Mono',monospace;color:#303030">127</div>
<div class="tt" style="left:43px;top:205.6px;font:bold 5.85px/6.4px 'Liberation Mono',monospace">            <span style="color:#141414">EIRR</span> <span style="color:#d82020">=</span> <span style="color:#e020d8">0</span><span style="color:#d82020">;</span></div>
<div class="tt" style="left:13px;top:213.1px;font:bold 5.9px/6.4px 'Liberation Mono',monospace;color:#303030">128</div>
<div class="tt" style="left:43px;top:213.1px;font:bold 5.85px/6.4px 'Liberation Mono',monospace">        <span style="color:#d82020">}</span></div>
<div class="tt" style="left:13px;top:220.6px;font:bold 5.9px/6.4px 'Liberation Mono',monospace;color:#303030">129</div>
<div class="tt" style="left:43px;top:220.6px;font:bold 5.85px/6.4px 'Liberation Mono',monospace">        <span style="color:#a8a8a8">/* check the sound selection switch */</span></div>
<div class="tt" style="left:13px;top:228.1px;font:bold 5.9px/6.4px 'Liberation Mono',monospace;color:#303030">130</div>
<div class="tt" style="left:43px;top:228.1px;font:bold 5.85px/6.4px 'Liberation Mono',monospace">        <span style="color:#1010c0;font-weight:bold">if</span> <span style="color:#d82020">(</span><span style="color:#e020d8">1</span> <span style="color:#d82020">==</span> <span style="color:#141414">bFM3_GPIO_PDIR1_P8</span><span style="color:#d82020">)</span></div>
<div class="tt" style="left:13px;top:235.6px;font:bold 5.9px/6.4px 'Liberation Mono',monospace;color:#303030">131</div>
<div class="tt" style="left:43px;top:235.6px;font:bold 5.85px/6.4px 'Liberation Mono',monospace">        <span style="color:#d82020">{</span></div>
<div class="tt" style="left:13px;top:243.1px;font:bold 5.9px/6.4px 'Liberation Mono',monospace;color:#303030">132</div>
<div class="tt" style="left:43px;top:243.1px;font:bold 5.85px/6.4px 'Liberation Mono',monospace">            <span style="color:#1010c0;font-weight:bold">while</span> <span style="color:#d82020">(</span><span style="color:#e020d8">1</span> <span style="color:#d82020">==</span> <span style="color:#141414">bFM3_GPIO_PDIR1_P8</span><span style="color:#d82020">)</span></div>
<div class="tt" style="left:13px;top:250.6px;font:bold 5.9px/6.4px 'Liberation Mono',monospace;color:#303030">133</div>
<div class="tt" style="left:43px;top:250.6px;font:bold 5.85px/6.4px 'Liberation Mono',monospace">            <span style="color:#d82020">{</span></div>
<div class="tt" style="left:13px;top:258.09999999999997px;font:bold 5.9px/6.4px 'Liberation Mono',monospace;color:#303030">134</div>
<div class="tt" style="left:43px;top:258.09999999999997px;font:bold 5.85px/6.4px 'Liberation Mono',monospace">                <span style="color:#1010c0;font-weight:bold">continue</span><span style="color:#d82020">;</span></div>
</div>
<div class="a" style="left:693.8px;top:233.7px;width:5.2px;height:5px;border:0.8px solid #909090;background:#fafafa"></div>
<div class="a" style="left:694.9px;top:235.89999999999998px;width:3px;height:0.7px;background:#909090;"></div>
<div class="a" style="left:693.8px;top:241.2px;width:5.2px;height:5px;border:0.8px solid #909090;background:#fafafa"></div>
<div class="a" style="left:694.9px;top:243.39999999999998px;width:3px;height:0.7px;background:#909090;"></div>
<div class="a" style="left:693.8px;top:286.2px;width:5.2px;height:5px;border:0.8px solid #909090;background:#fafafa"></div>
<div class="a" style="left:694.9px;top:288.4px;width:3px;height:0.7px;background:#909090;"></div>
<div class="a" style="left:693.8px;top:301.2px;width:5.2px;height:5px;border:0.8px solid #909090;background:#fafafa"></div>
<div class="a" style="left:694.9px;top:303.4px;width:3px;height:0.7px;background:#909090;"></div>
<div class="a" style="left:696px;top:50.5px;width:0.8px;height:261px;background:#c0c0c0;"></div>
<svg class="a" style="left:684.5px;top:277.5px" width="6" height="7"><path d="M0.5 1 h3 l2 2.5 l-2 2.5 h-3z" fill="#f0e818" stroke="#807000" stroke-width="0.6"/></svg>
<div class="a" style="left:703px;top:277px;width:0.8px;height:7px;background:#333;"></div>
<div class="a" style="left:912.5px;top:50.5px;width:7px;height:261px;background:#f0f0f0;"></div>
<div class="a" style="left:913px;top:205px;width:7px;height:50.5px;background:#cdcdcd;"></div>
<svg class="a" style="left:913px;top:53px" width="7" height="5"><path d="M1 4 L3.5 1.5 L6 4" stroke="#555" fill="none" stroke-width="1"/></svg>
<svg class="a" style="left:913px;top:305px" width="7" height="5"><path d="M1 1 L3.5 3.5 L6 1" stroke="#555" fill="none" stroke-width="1"/></svg>
<div class="a" style="left:657.5px;top:311.4px;width:263px;height:8.6px;background:#f0f0f0;"></div>
<div class="a" style="left:667px;top:312px;width:49.7px;height:6.4px;background:#cdcdcd;"></div>
<div class="tt" style="left:660.5px;top:311.5px;font-size:7px;line-height:7px;color:#444;">‹</div>
<div class="tt" style="left:906px;top:311.5px;font-size:7px;line-height:7px;color:#444;">›</div>
<div class="a" style="left:657.5px;top:323.2px;width:263px;height:9.3px;background:#42577f;"></div>
<div class="tt" style="left:658.5px;top:325.28px;font-size:5.4px;line-height:5.4px;color:#f0f0f0;">Logs &amp; others</div>
<svg class="a" style="left:913px;top:325px" width="7" height="7"><path d="M1 1 L6 6 M6 1 L1 6" stroke="#fff" stroke-width="1"/></svg>
<div class="a" style="left:657.5px;top:332.5px;width:263px;height:106.5px;background:#f4f5f5;"></div>
<div class="tt" style="left:659px;top:341px;font:bold 5px/6px 'Liberation Mono',monospace;color:#222">-------------- Build: Debug in LED_FM3_QEMU ---------------</div>
<div class="tt" style="left:659px;top:350.5px;font:5px/6px 'Liberation Mono',monospace;color:#222">Target is up to date (Debug).</div>
<div class="tt" style="left:659px;top:357.3px;font:italic 5px/6px 'Liberation Mono',monospace;color:#2020e0">Process terminated with status 0 (0 minutes, 0 seconds)</div>
<div class="tt" style="left:659px;top:363.7px;font:italic 5px/6px 'Liberation Mono',monospace;color:#2020e0">0 errors, 0 warnings (0 minutes, 0 seconds)</div>
<div class="a" style="left:657.5px;top:439px;width:263px;height:7.4px;background:#dedede;"></div>
<div class="a" style="left:657.4px;top:447.8px;width:38.6px;height:10.5px;background:#f4f5f5;"></div>
<svg class="a" style="left:659px;top:448.5px" width="8" height="9"><rect x="1" y="2" width="6" height="6" fill="#fff8d0" stroke="#c8a040" stroke-width="0.7"/><rect x="2" y="4" width="4" height="0.8" fill="#c0a040"/></svg>
<div class="tt" style="left:668px;top:450.70px;font-size:5.9px;line-height:5.9px;color:#1a1a1a;">Build log</div>
<svg class="a" style="left:700px;top:448.5px" width="8" height="9"><path d="M1.5 1.5 v7" stroke="#703000" stroke-width="0.9"/><path d="M2 1.5 h5 l-1.5 2 l1.5 2 h-5z" fill="#e03030"/></svg>
<div class="tt" style="left:708px;top:450.75px;font-size:5.8px;line-height:5.8px;color:#f0f0f0;">Build messages</div>
<svg class="a" style="left:757px;top:448.5px" width="9" height="9"><circle cx="4" cy="4" r="2.6" fill="#d8ecfc" stroke="#e0e0e0" stroke-width="0.9"/><path d="M6 6 L8.5 8.5" stroke="#e8c040" stroke-width="1.4"/></svg>
<div class="tt" style="left:767px;top:450.75px;font-size:5.8px;line-height:5.8px;color:#f0f0f0;">Search results</div>
<svg class="a" style="left:813px;top:448.5px" width="9" height="9"><rect x="1" y="1.5" width="6" height="7" fill="#e0e8f4"/><circle cx="4" cy="4.5" r="2" fill="#b8d0f0" stroke="#4070b0" stroke-width="0.6"/><path d="M5.5 6 L8 8.5" stroke="#d0a020" stroke-width="1.2"/></svg>
<div class="tt" style="left:823px;top:450.75px;font-size:5.8px;line-height:5.8px;color:#f0f0f0;">Cscope</div>
<svg class="a" style="left:850px;top:448.5px" width="9" height="9"><circle cx="4.5" cy="4.5" r="3.8" fill="#e02828"/><circle cx="4.5" cy="4.5" r="2.6" fill="#fff"/><path d="M3 3 L6 6 M6 3 L3 6" stroke="#e02828" stroke-width="1"/></svg>
<div class="tt" style="left:859px;top:450.75px;font-size:5.8px;line-height:5.8px;color:#f0f0f0;">Debugger</div>
<svg class="a" style="left:915px;top:451px" width="5" height="4"><path d="M0 0 L5 0 L2.5 3z" fill="#ddd"/></svg>
<div class="a" style="left:408px;top:459.5px;width:512.5px;height:9.5px;background:#2b3b5c;"></div>
<div class="tt" style="left:409.8px;top:461.14px;font-size:6.0px;line-height:6.0px;color:#e8e8e8;">F:¥2014¥1408¥VSK¥mb9bf51xr_pwmout¥example¥sx  WINDOWS-932</div>
<div class="tt" style="left:619.7px;top:461.14px;font-size:6.0px;line-height:6.0px;color:#e8e8e8;">Line 130, Column 1</div>
<div class="tt" style="left:707.6px;top:461.14px;font-size:6.0px;line-height:6.0px;color:#e8e8e8;">Insert</div>
<div class="tt" style="left:781.4px;top:461.08px;font-size:6.1px;line-height:6.1px;color:#e8e8e8;">Read/Write</div>
<div class="tt" style="left:833.3px;top:461.14px;font-size:6.0px;line-height:6.0px;color:#e8e8e8;">default</div>
<div class="a" style="left:903px;top:461.5px;width:7px;height:5px;background:#d04040;border-top:2px solid #3050a0"></div>
</body></html>
